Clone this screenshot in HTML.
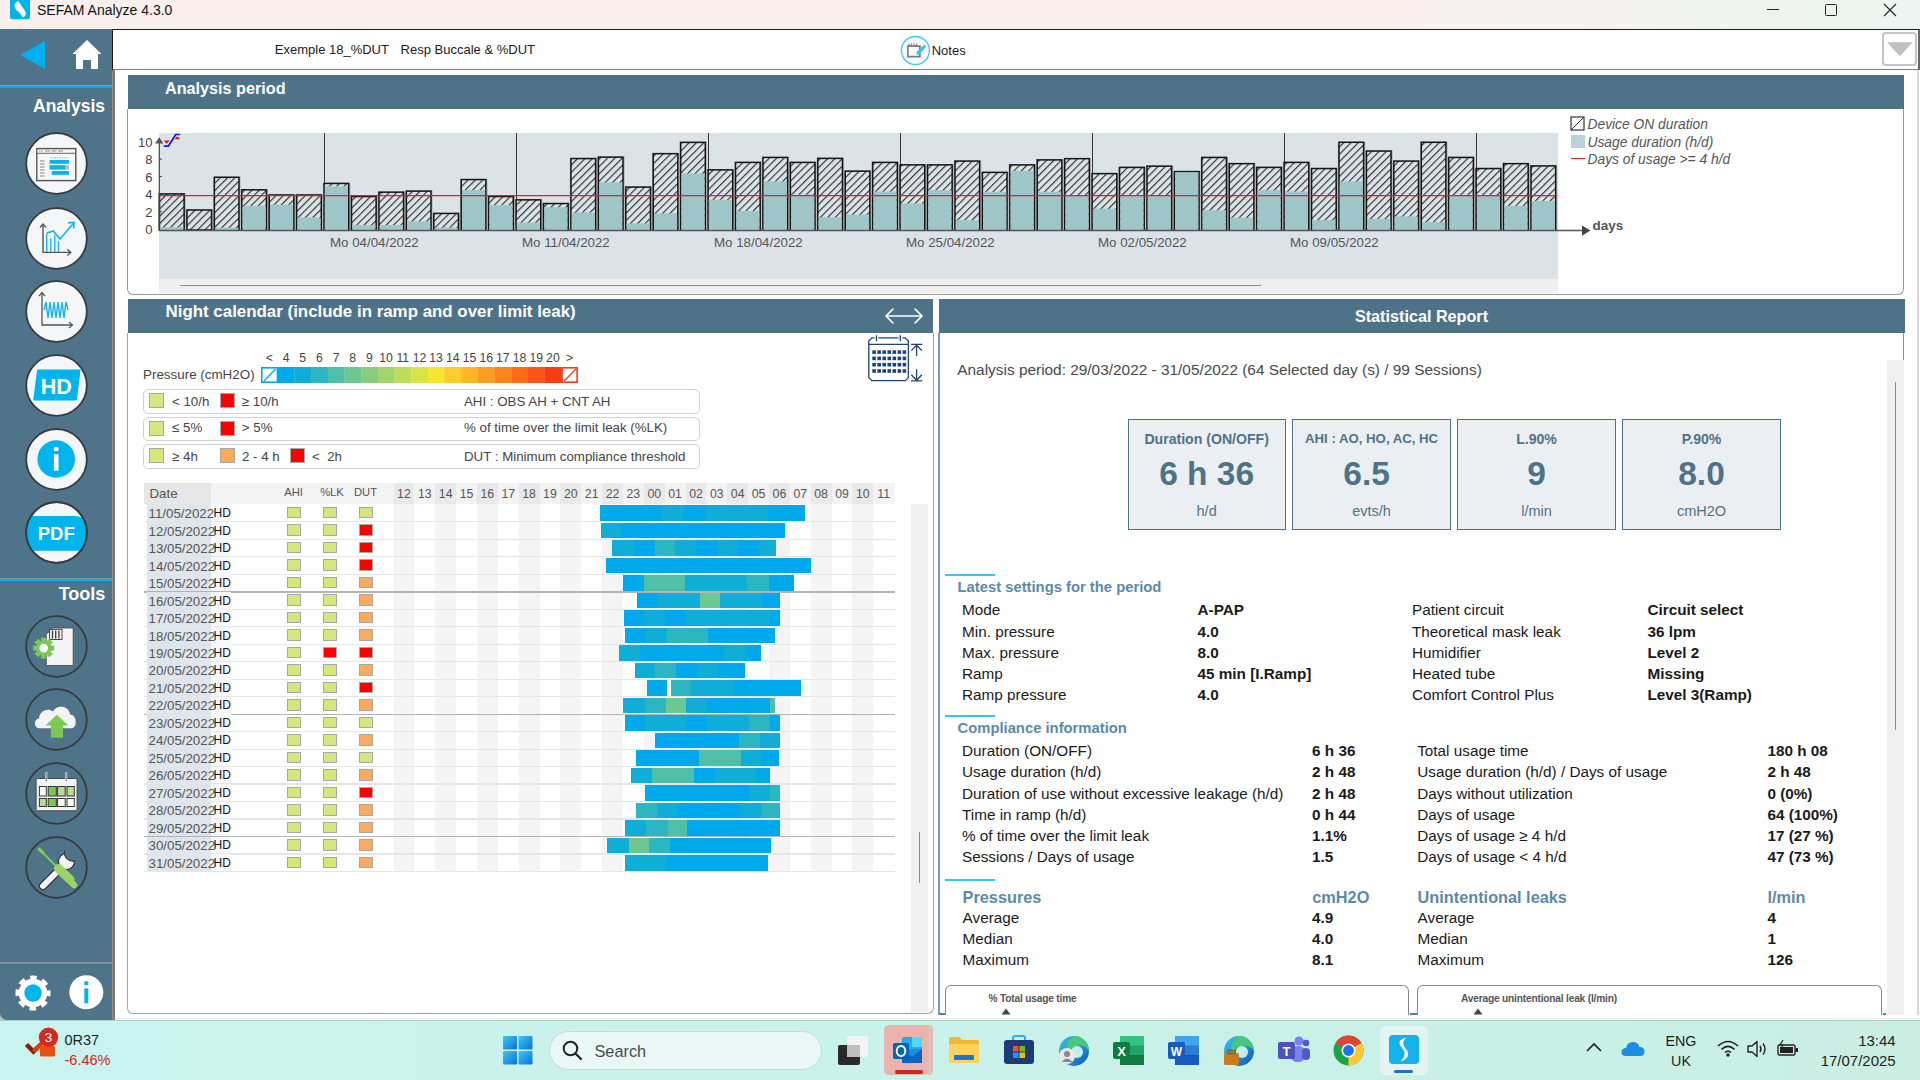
<!DOCTYPE html><html><head><meta charset="utf-8"><style>
html,body{margin:0;padding:0;width:1920px;height:1080px;overflow:hidden;background:#fff;font-family:'Liberation Sans', sans-serif;}
.t{position:absolute;white-space:pre;line-height:1;}
.r{position:absolute;box-sizing:border-box;}
svg{position:absolute;overflow:visible;}
</style></head><body>
<div class="r" style="left:0px;top:0px;width:1920px;height:29px;background:linear-gradient(90deg,#f9f0ee 0%,#f9f0ee 73%,#ebf5f1 100%);"></div>
<svg style="left:10px;top:0px" width="20" height="20" viewBox="0 0 20 20"><rect x="0" y="-3" width="20" height="22.2" rx="2.5" fill="#00b4ea"/><path d="M6.3 2.2 Q7.6 0.6 9 1.8 Q10.3 4.2 12.6 7.4 Q15.4 10.3 15.9 13.2 Q15.8 16.6 12.6 17.5 Q11.4 14.8 8.8 12 Q4.4 8.8 4.4 5.2 Q4.8 3.2 6.3 2.2 Z" fill="#fff"/></svg>
<div class="t" style="left:37.00px;top:3.15px;font-size:14px;color:#111;">SEFAM Analyze 4.3.0</div>
<div class="r" style="left:1767px;top:9px;width:12px;height:1px;background:#222;"></div>
<div class="r" style="left:1825px;top:4px;width:12px;height:12px;border:1.2px solid #222;border-radius:1.5px;"></div>
<svg style="left:1884px;top:4px" width="12" height="12"><path d="M0 0L12 12M12 0L0 12" stroke="#222" stroke-width="1.1"/></svg>
<div class="r" style="left:0px;top:1010px;width:10px;height:10px;background:#c4c4c4;"></div>
<div class="r" style="left:0px;top:29px;width:112px;height:991px;background:#4f7389;border-radius:0 0 0 7px;"></div>
<div class="r" style="left:112px;top:29px;width:1.2px;height:991px;background:#8e8e8e;"></div>
<div class="r" style="left:113.2px;top:29px;width:1.9px;height:991px;background:#767676;"></div>
<svg style="left:20px;top:41px" width="26" height="28"><path d="M25 0 L25 28 L0 14 Z" fill="#00b0ef"/></svg>
<svg style="left:72px;top:40px" width="30" height="30"><path d="M15 0 L29.5 14 L26 14 L26 29 L19 29 L19 20 L11 20 L11 29 L4 29 L4 14 L0.5 14 Z" fill="#fff"/></svg>
<div class="r" style="left:0px;top:85px;width:112px;height:1px;background:#8a9aa4;"></div>
<div class="r" style="left:0px;top:86px;width:112px;height:2px;background:#00b0f0;"></div>
<div class="t" style="right:1815.00px;top:98.19px;font-size:17.5px;color:#fff;font-weight:700;">Analysis</div>
<div class="r" style="left:0px;top:578px;width:112px;height:1px;background:#8a9aa4;"></div>
<div class="r" style="left:0px;top:579px;width:112px;height:1.6px;background:#00b0f0;"></div>
<div class="t" style="right:1814.70px;top:584.76px;font-size:18px;color:#fff;font-weight:700;">Tools</div>
<div class="r" style="left:0px;top:962px;width:112px;height:1px;background:#8a9aa4;"></div>
<div class="r" style="left:0px;top:963.2px;width:112px;height:1.3px;background:#00b0f0;"></div>
<svg style="left:25px;top:132.0px" width="63" height="63" viewBox="0 0 63 63"><circle cx="31.5" cy="31.5" r="30.3" fill="#f5f6f8" stroke="#363b40" stroke-width="1.8"/><rect x="11.8" y="16.6" width="39" height="32" fill="#f7f7f8" stroke="#555" stroke-width="1.4"/>
<line x1="11.8" y1="21.3" x2="50.8" y2="21.3" stroke="#666" stroke-width="1"/>
<path d="M14 19h1.5M16.5 19h1.5M20 19h5M26.5 19h5M33 19h5" stroke="#888" stroke-width="1"/>
<path d="M15 29h4.6M15 32h4.6M15 35h4.6M15 38h4.6M15 41h4.6M15 44h4.6" stroke="#888" stroke-width="1.1"/>
<path d="M25 25.8h19" stroke="#999" stroke-width="0.9" stroke-dasharray="1.2 1.2"/>
<rect x="24.6" y="28" width="19.3" height="3.8" fill="#00b4ec"/><rect x="24.6" y="33.2" width="16" height="4.4" fill="#00b4ec"/><rect x="40.6" y="33.2" width="3.3" height="4.4" fill="#b8b8b8"/><rect x="26.8" y="39" width="17.1" height="3.8" fill="#00b4ec"/></svg>
<svg style="left:25px;top:206.5px" width="63" height="63" viewBox="0 0 63 63"><circle cx="31.5" cy="31.5" r="30.3" fill="#f5f6f8" stroke="#363b40" stroke-width="1.8"/><path d="M18 17.5 V45.4 H45.5" fill="none" stroke="#555" stroke-width="1.4"/><path d="M15 20.5 L18 17 L21 20.5" fill="none" stroke="#555" stroke-width="1.3"/><path d="M42.3 42.3 L45.8 45.4 L42.3 48.5" fill="none" stroke="#555" stroke-width="1.3"/>
<path d="M21.7 45 V26.8 M25.8 45 V31.3 M29.8 45 V28.3 M33.5 45 V34.2" stroke="#1ab4e8" stroke-width="1.4"/>
<path d="M21.7 26.1 L28.3 23.9 L35 32 L48.5 16.2" fill="none" stroke="#1ab4e8" stroke-width="1.7"/><path d="M43 15.8 L49 15.5 L48.7 21.5" fill="none" stroke="#1ab4e8" stroke-width="1.7"/></svg>
<svg style="left:25px;top:280.0px" width="63" height="63" viewBox="0 0 63 63"><circle cx="31.5" cy="31.5" r="30.3" fill="#f5f6f8" stroke="#363b40" stroke-width="1.8"/><path d="M17 13 V45 H47" fill="none" stroke="#555" stroke-width="1.3"/><path d="M14 16 L17 12.5 L20 16" fill="none" stroke="#555" stroke-width="1.2"/><path d="M44 42 L47.5 45 L44 48" fill="none" stroke="#555" stroke-width="1.2"/>
<path d="M19 30 L21 22 L23 38 L25 22 L27 38 L29 22 L31 38 L33 22 L35 38 L37 22 L39 38 L41 22 L43 30" fill="none" stroke="#1ab4e8" stroke-width="1.4"/></svg>
<svg style="left:25px;top:354.0px" width="63" height="63" viewBox="0 0 63 63"><circle cx="31.5" cy="31.5" r="30.3" fill="#f5f6f8" stroke="#363b40" stroke-width="1.8"/><path d="M13.3 15.4 H55 Q55.6 15.4 55.5 16.4 L51.9 45.5 Q51.8 46.5 50.8 46.5 H9.2 Q8.2 46.5 8.3 45.5 L12 16.4 Q12.2 15.4 13.3 15.4 Z" fill="#00b4ec"/><text x="31.2" y="39.8" font-family="Liberation Sans" font-weight="700" font-size="21.5" fill="#fff" text-anchor="middle">HD</text></svg>
<svg style="left:25px;top:427.5px" width="63" height="63" viewBox="0 0 63 63"><circle cx="31.5" cy="31.5" r="30.3" fill="#f5f6f8" stroke="#363b40" stroke-width="1.8"/><circle cx="31.2" cy="31" r="18.8" fill="#00b4ec"/><rect x="28.9" y="19.3" width="4.6" height="3.8" rx="0.8" fill="#fff"/><rect x="28.9" y="26.3" width="4.6" height="16.4" fill="#fff"/></svg>
<svg style="left:25px;top:501.0px" width="63" height="63" viewBox="0 0 63 63"><defs><clipPath id="pc"><circle cx="31.5" cy="31.5" r="30.3"/></clipPath></defs><circle cx="31.5" cy="31.5" r="30.3" fill="#f5f6f8" stroke="#363b40" stroke-width="1.8"/><path d="M0 15 L50 15 L63 17 L63 49.7 L0 49.7 Z" fill="#00b4ec" clip-path="url(#pc)"/><circle cx="31.5" cy="31.5" r="30.3" fill="none" stroke="#363b40" stroke-width="1.8"/><text x="31.2" y="38.6" font-family="Liberation Sans" font-weight="700" font-size="18.5" fill="#fff" text-anchor="middle">PDF</text></svg>
<svg style="left:25px;top:614.5px" width="63" height="63" viewBox="0 0 63 63"><circle cx="31.5" cy="31.5" r="30.3" fill="none" stroke="#363b40" stroke-width="1.8"/><path d="M27.5 13 H48.2 V50.5 H21.3 V19.5 Z" fill="#f4f4f6" stroke="#444" stroke-width="0.8"/><rect x="24.5" y="14.3" width="12.5" height="10.2" fill="#f4f4f6" stroke="#333" stroke-width="0.9"/><path d="M27.5 15.5 V23.5 M30.7 15.5 V23.5 M33.9 15.5 V23.5" stroke="#333" stroke-width="1.3"/>
<g transform="translate(18.7,33.1)"><rect x="-2.6" y="-10.5" width="5.2" height="5" fill="#7dc855" transform="rotate(0)"/><rect x="-2.6" y="-10.5" width="5.2" height="5" fill="#7dc855" transform="rotate(45)"/><rect x="-2.6" y="-10.5" width="5.2" height="5" fill="#7dc855" transform="rotate(90)"/><rect x="-2.6" y="-10.5" width="5.2" height="5" fill="#7dc855" transform="rotate(135)"/><rect x="-2.6" y="-10.5" width="5.2" height="5" fill="#7dc855" transform="rotate(180)"/><rect x="-2.6" y="-10.5" width="5.2" height="5" fill="#7dc855" transform="rotate(225)"/><rect x="-2.6" y="-10.5" width="5.2" height="5" fill="#7dc855" transform="rotate(270)"/><rect x="-2.6" y="-10.5" width="5.2" height="5" fill="#7dc855" transform="rotate(315)"/><circle r="7.6" fill="#7dc855"/><circle r="4.3" fill="#fff"/></g></svg>
<svg style="left:25px;top:688.0px" width="63" height="63" viewBox="0 0 63 63"><circle cx="31.5" cy="31.5" r="30.3" fill="none" stroke="#363b40" stroke-width="1.8"/><path d="M14.5 40.3 C8.5 40.3 8.5 31 14 30.5 C14.5 23 23 19.5 28 23.5 C31 16.5 44 17 45 26.5 C52 26.5 53 40.3 46 40.3 Z" fill="#f4f4f4"/><path d="M31.9 26.8 L43.4 37.5 H38 V49.7 H25.9 V37.5 H20.5 Z" fill="#7dc855"/></svg>
<svg style="left:25px;top:761.5px" width="63" height="63" viewBox="0 0 63 63"><circle cx="31.5" cy="31.5" r="30.3" fill="none" stroke="#363b40" stroke-width="1.8"/><rect x="11.1" y="16.5" width="41" height="32.3" rx="1.5" fill="#f4f4f4" stroke="#444" stroke-width="1"/><path d="M21.3 11 V19 M41.2 11 V19" stroke="#ddd" stroke-width="2.2" stroke-linecap="round"/><path d="M21.3 11 V19 M41.2 11 V19" stroke="#555" stroke-width="0.7"/>
<g stroke="#333" stroke-width="1"><rect x="14.4" y="24.5" width="6.9" height="9.5" fill="#fff"/><rect x="23.2" y="24.5" width="8.1" height="9.5" fill="#7dc855"/><rect x="32.6" y="24.5" width="7.6" height="9.5" fill="#b6dc98"/><rect x="42" y="24.5" width="7.3" height="9.5" fill="#b6dc98"/>
<rect x="14.4" y="36.5" width="6.9" height="8" fill="#b6dc98"/><rect x="23.2" y="36.5" width="8.1" height="8" fill="#7dc855"/><rect x="32.6" y="36.5" width="7.6" height="8" fill="#fff"/><rect x="42" y="36.5" width="7.3" height="8" fill="#fff"/></g></svg>
<svg style="left:25px;top:835.5px" width="63" height="63" viewBox="0 0 63 63"><circle cx="31.5" cy="31.5" r="30.3" fill="none" stroke="#363b40" stroke-width="1.8"/><path d="M18 50 L30 38" stroke="#2e3338" stroke-width="8.2" stroke-linecap="round"/><path d="M18 50 L30 38" stroke="#f4f4f4" stroke-width="6" stroke-linecap="round"/>
<circle cx="41.5" cy="25.5" r="8.6" fill="#2e3338"/><circle cx="41.5" cy="25.5" r="7.4" fill="#f4f4f4"/><path d="M39 14 L44 11.5 L53 20.5 L50.5 25.5 Q45 26 41.5 22.5 Q38.5 19 39 14 Z" fill="#4f7389"/><path d="M39.6 14.6 Q38.8 19.5 41.8 22.7 Q45.2 25.8 50 25" fill="none" stroke="#2e3338" stroke-width="1.1"/>
<path d="M16 15 L32 31" stroke="#7dc855" stroke-width="2"/><path d="M14.2 13.2 L17.6 16.6" stroke="#7dc855" stroke-width="3.6" stroke-linecap="round"/>
<path d="M33.5 32.5 L45 43.5" stroke="#9cd46a" stroke-width="9" stroke-linecap="round"/><path d="M46.8 46.8 L49 49" stroke="#9cd46a" stroke-width="6.5" stroke-linecap="round"/></svg>
<svg style="left:14.5px;top:974.5px" width="36" height="36" viewBox="0 0 36 36"><g transform="translate(18,18)"><circle r="14.3" fill="#fff"/><circle r="15.6" fill="none" stroke="#fff" stroke-width="3.9" stroke-dasharray="6.6 5.65" stroke-dashoffset="3.3" stroke-linejoin="round"/><circle r="8.7" fill="#00b4ec"/></g></svg>
<svg style="left:68.5px;top:975px" width="35" height="35" viewBox="0 0 35 35"><circle cx="17.3" cy="17.3" r="17" fill="#fff"/><rect x="15.3" y="6.3" width="4" height="3.8" fill="#00b4ec"/><rect x="15.3" y="13.4" width="4" height="15" fill="#00b4ec"/></svg>
<div class="r" style="left:112px;top:29px;width:1808px;height:42px;background:#fff;border-top:1.5px solid #1a1a1a;border-left:1.5px solid #1a1a1a;border-bottom:2.2px solid #7c7c7c;border-right:2px solid #666;"></div>
<div class="t" style="left:274.80px;top:42.75px;font-size:13px;color:#1a1a1a;">Exemple 18_%DUT</div>
<div class="t" style="left:400.60px;top:42.75px;font-size:13px;color:#1a1a1a;">Resp Buccale &amp; %DUT</div>
<svg style="left:900px;top:35px" width="31" height="31" viewBox="0 0 31 31"><circle cx="15.4" cy="15.5" r="14" fill="#f6f7f9" stroke="#4cc6f0" stroke-width="1.4"/><path d="M7.9 11.2 H19.9 V21.7 H7.9 Z" fill="#fbfbfc" stroke="#7a7c80" stroke-width="1.7"/><path d="M9 8.5 V11 M11.5 8.5 V11 M14 8.5 V11 M16.5 8.5 V11" stroke="#888" stroke-width="1.1"/><path d="M18 18 L24.3 11.7" stroke="#3cc0ee" stroke-width="3.2" stroke-linecap="round"/></svg>
<div class="t" style="left:931.70px;top:44.00px;font-size:13px;color:#1a1a1a;">Notes</div>
<div class="r" style="left:1882.3px;top:32.3px;width:34.4px;height:33.4px;border:2.3px solid #c4c4c4;border-radius:4px;background:#fff;"></div>
<svg style="left:1886.5px;top:41.5px" width="26" height="15"><path d="M0 0.3 H25.7 L12.85 14.2 Z" fill="#c0c0c0"/></svg>
<div class="r" style="left:115px;top:70px;width:1805px;height:950px;background:#fff;"></div>
<div class="r" style="left:1917px;top:70px;width:1.5px;height:950px;background:#d8d8d8;"></div>
<div class="r" style="left:128px;top:75px;width:1775.5px;height:34px;background:#4e7389;"></div>
<div class="t" style="left:165.00px;top:80.29px;font-size:16.2px;color:#fff;font-weight:700;">Analysis period</div>
<div class="r" style="left:127px;top:109px;width:1777px;height:186px;border:1.6px solid #999;border-top:none;border-radius:0 0 6px 6px;"></div>
<div class="r" style="left:158.5px;top:133px;width:1399px;height:145.5px;background:#dce3e7;"></div>
<div class="r" style="left:158.5px;top:278.5px;width:1399px;height:14.8px;background:#efefef;"></div>
<div class="r" style="left:180px;top:284.8px;width:1080.5px;height:1.5px;background:#8c8c8c;"></div>
<div class="r" style="left:323.5px;top:133px;width:1px;height:97px;background:#333;"></div>
<div class="r" style="left:515.5px;top:133px;width:1px;height:97px;background:#333;"></div>
<div class="r" style="left:707.5px;top:133px;width:1px;height:97px;background:#333;"></div>
<div class="r" style="left:899.5px;top:133px;width:1px;height:97px;background:#333;"></div>
<div class="r" style="left:1091.5px;top:133px;width:1px;height:97px;background:#333;"></div>
<div class="r" style="left:1283.5px;top:133px;width:1px;height:97px;background:#333;"></div>
<div class="r" style="left:1475.5px;top:133px;width:1px;height:97px;background:#333;"></div>
<svg style="left:0;top:0" width="1920" height="300"><defs><pattern id="hatch" patternUnits="userSpaceOnUse" width="5.2" height="8" patternTransform="rotate(45)"><rect width="5.2" height="8" fill="#dce3e7"/><line x1="0.6" y1="0" x2="0.6" y2="8" stroke="#222" stroke-width="1.05"/></pattern></defs><rect x="158.30" y="193.22" width="27.43" height="36.78" fill="#b0b0b0"/><rect x="159.50" y="193.92" width="24.63" height="36.08" fill="url(#hatch)" stroke="#151515" stroke-width="1.5"/><rect x="160.25" y="227.35" width="23.13" height="2.65" fill="#9ec6c8"/><rect x="185.73" y="209.32" width="27.43" height="20.68" fill="#b0b0b0"/><rect x="186.93" y="210.02" width="24.63" height="19.98" fill="url(#hatch)" stroke="#151515" stroke-width="1.5"/><rect x="213.16" y="176.60" width="27.43" height="53.40" fill="#b0b0b0"/><rect x="214.36" y="177.30" width="24.63" height="52.70" fill="url(#hatch)" stroke="#151515" stroke-width="1.5"/><rect x="215.11" y="227.79" width="23.13" height="2.21" fill="#9ec6c8"/><rect x="240.59" y="189.11" width="27.43" height="40.89" fill="#b0b0b0"/><rect x="241.79" y="189.81" width="24.63" height="40.19" fill="url(#hatch)" stroke="#151515" stroke-width="1.5"/><rect x="242.54" y="205.91" width="23.13" height="24.09" fill="#9ec6c8"/><rect x="268.02" y="194.27" width="27.43" height="35.73" fill="#b0b0b0"/><rect x="269.22" y="194.97" width="24.63" height="35.03" fill="url(#hatch)" stroke="#151515" stroke-width="1.5"/><rect x="269.97" y="204.60" width="23.13" height="25.40" fill="#9ec6c8"/><rect x="295.45" y="194.27" width="27.43" height="35.73" fill="#b0b0b0"/><rect x="296.65" y="194.97" width="24.63" height="35.03" fill="url(#hatch)" stroke="#151515" stroke-width="1.5"/><rect x="297.40" y="217.46" width="23.13" height="12.54" fill="#9ec6c8"/><rect x="322.88" y="182.72" width="27.43" height="47.28" fill="#b0b0b0"/><rect x="324.08" y="183.42" width="24.63" height="46.58" fill="url(#hatch)" stroke="#151515" stroke-width="1.5"/><rect x="324.83" y="186.22" width="23.13" height="43.78" fill="#9ec6c8"/><rect x="350.31" y="195.85" width="27.43" height="34.15" fill="#b0b0b0"/><rect x="351.51" y="196.55" width="24.63" height="33.45" fill="url(#hatch)" stroke="#151515" stroke-width="1.5"/><rect x="352.26" y="224.99" width="23.13" height="5.01" fill="#9ec6c8"/><rect x="377.74" y="191.47" width="27.43" height="38.53" fill="#b0b0b0"/><rect x="378.94" y="192.17" width="24.63" height="37.83" fill="url(#hatch)" stroke="#151515" stroke-width="1.5"/><rect x="379.69" y="224.99" width="23.13" height="5.01" fill="#9ec6c8"/><rect x="405.17" y="190.43" width="27.43" height="39.57" fill="#b0b0b0"/><rect x="406.37" y="191.12" width="24.63" height="38.87" fill="url(#hatch)" stroke="#151515" stroke-width="1.5"/><rect x="407.12" y="221.31" width="23.13" height="8.69" fill="#9ec6c8"/><rect x="432.60" y="212.74" width="27.43" height="17.26" fill="#b0b0b0"/><rect x="433.80" y="213.44" width="24.63" height="16.56" fill="url(#hatch)" stroke="#151515" stroke-width="1.5"/><rect x="434.55" y="227.61" width="23.13" height="2.39" fill="#9ec6c8"/><rect x="460.03" y="178.88" width="27.43" height="51.12" fill="#b0b0b0"/><rect x="461.23" y="179.57" width="24.63" height="50.42" fill="url(#hatch)" stroke="#151515" stroke-width="1.5"/><rect x="461.98" y="189.99" width="23.13" height="40.01" fill="#9ec6c8"/><rect x="487.46" y="195.85" width="27.43" height="34.15" fill="#b0b0b0"/><rect x="488.66" y="196.55" width="24.63" height="33.45" fill="url(#hatch)" stroke="#151515" stroke-width="1.5"/><rect x="489.41" y="205.04" width="23.13" height="24.96" fill="#9ec6c8"/><rect x="514.89" y="199.17" width="27.43" height="30.83" fill="#b0b0b0"/><rect x="516.09" y="199.87" width="24.63" height="30.13" fill="url(#hatch)" stroke="#151515" stroke-width="1.5"/><rect x="516.84" y="222.54" width="23.13" height="7.46" fill="#9ec6c8"/><rect x="542.32" y="202.85" width="27.43" height="27.15" fill="#b0b0b0"/><rect x="543.52" y="203.55" width="24.63" height="26.45" fill="url(#hatch)" stroke="#151515" stroke-width="1.5"/><rect x="544.27" y="207.22" width="23.13" height="22.78" fill="#9ec6c8"/><rect x="569.75" y="157.88" width="27.43" height="72.12" fill="#b0b0b0"/><rect x="570.95" y="158.57" width="24.63" height="71.42" fill="url(#hatch)" stroke="#151515" stroke-width="1.5"/><rect x="571.70" y="212.47" width="23.13" height="17.53" fill="#9ec6c8"/><rect x="597.18" y="156.47" width="27.43" height="73.53" fill="#b0b0b0"/><rect x="598.38" y="157.17" width="24.63" height="72.83" fill="url(#hatch)" stroke="#151515" stroke-width="1.5"/><rect x="599.13" y="182.38" width="23.13" height="47.62" fill="#9ec6c8"/><rect x="624.61" y="186.40" width="27.43" height="43.60" fill="#b0b0b0"/><rect x="625.81" y="187.10" width="24.63" height="42.90" fill="url(#hatch)" stroke="#151515" stroke-width="1.5"/><rect x="626.56" y="223.41" width="23.13" height="6.59" fill="#9ec6c8"/><rect x="652.04" y="152.97" width="27.43" height="77.03" fill="#b0b0b0"/><rect x="653.24" y="153.67" width="24.63" height="76.33" fill="url(#hatch)" stroke="#151515" stroke-width="1.5"/><rect x="653.99" y="213.44" width="23.13" height="16.56" fill="#9ec6c8"/><rect x="679.47" y="141.69" width="27.43" height="88.31" fill="#b0b0b0"/><rect x="680.67" y="142.39" width="24.63" height="87.61" fill="url(#hatch)" stroke="#151515" stroke-width="1.5"/><rect x="681.42" y="173.45" width="23.13" height="56.55" fill="#9ec6c8"/><rect x="706.90" y="169.16" width="27.43" height="60.84" fill="#b0b0b0"/><rect x="708.10" y="169.86" width="24.63" height="60.14" fill="url(#hatch)" stroke="#151515" stroke-width="1.5"/><rect x="708.85" y="199.70" width="23.13" height="30.30" fill="#9ec6c8"/><rect x="734.33" y="161.72" width="27.43" height="68.28" fill="#b0b0b0"/><rect x="735.53" y="162.42" width="24.63" height="67.58" fill="url(#hatch)" stroke="#151515" stroke-width="1.5"/><rect x="736.28" y="210.99" width="23.13" height="19.01" fill="#9ec6c8"/><rect x="761.76" y="156.74" width="27.43" height="73.26" fill="#b0b0b0"/><rect x="762.96" y="157.44" width="24.63" height="72.56" fill="url(#hatch)" stroke="#151515" stroke-width="1.5"/><rect x="763.71" y="181.41" width="23.13" height="48.59" fill="#9ec6c8"/><rect x="789.19" y="161.72" width="27.43" height="68.28" fill="#b0b0b0"/><rect x="790.39" y="162.42" width="24.63" height="67.58" fill="url(#hatch)" stroke="#151515" stroke-width="1.5"/><rect x="791.14" y="194.71" width="23.13" height="35.29" fill="#9ec6c8"/><rect x="816.62" y="157.70" width="27.43" height="72.30" fill="#b0b0b0"/><rect x="817.82" y="158.40" width="24.63" height="71.60" fill="url(#hatch)" stroke="#151515" stroke-width="1.5"/><rect x="818.57" y="217.20" width="23.13" height="12.80" fill="#9ec6c8"/><rect x="844.05" y="170.47" width="27.43" height="59.53" fill="#b0b0b0"/><rect x="845.25" y="171.17" width="24.63" height="58.83" fill="url(#hatch)" stroke="#151515" stroke-width="1.5"/><rect x="846.00" y="214.66" width="23.13" height="15.34" fill="#9ec6c8"/><rect x="871.48" y="161.72" width="27.43" height="68.28" fill="#b0b0b0"/><rect x="872.68" y="162.42" width="24.63" height="67.58" fill="url(#hatch)" stroke="#151515" stroke-width="1.5"/><rect x="873.43" y="191.47" width="23.13" height="38.53" fill="#9ec6c8"/><rect x="898.91" y="164.18" width="27.43" height="65.82" fill="#b0b0b0"/><rect x="900.11" y="164.88" width="24.63" height="65.12" fill="url(#hatch)" stroke="#151515" stroke-width="1.5"/><rect x="900.86" y="203.46" width="23.13" height="26.54" fill="#9ec6c8"/><rect x="926.34" y="164.18" width="27.43" height="65.82" fill="#b0b0b0"/><rect x="927.54" y="164.88" width="24.63" height="65.12" fill="url(#hatch)" stroke="#151515" stroke-width="1.5"/><rect x="928.29" y="190.16" width="23.13" height="39.84" fill="#9ec6c8"/><rect x="953.77" y="160.41" width="27.43" height="69.59" fill="#b0b0b0"/><rect x="954.97" y="161.11" width="24.63" height="68.89" fill="url(#hatch)" stroke="#151515" stroke-width="1.5"/><rect x="955.72" y="220.17" width="23.13" height="9.83" fill="#9ec6c8"/><rect x="981.20" y="171.70" width="27.43" height="58.30" fill="#b0b0b0"/><rect x="982.40" y="172.40" width="24.63" height="57.60" fill="url(#hatch)" stroke="#151515" stroke-width="1.5"/><rect x="983.15" y="191.74" width="23.13" height="38.26" fill="#9ec6c8"/><rect x="1008.63" y="164.18" width="27.43" height="65.82" fill="#b0b0b0"/><rect x="1009.83" y="164.88" width="24.63" height="65.12" fill="url(#hatch)" stroke="#151515" stroke-width="1.5"/><rect x="1010.58" y="170.91" width="23.13" height="59.09" fill="#9ec6c8"/><rect x="1036.06" y="159.19" width="27.43" height="70.81" fill="#b0b0b0"/><rect x="1037.26" y="159.89" width="24.63" height="70.11" fill="url(#hatch)" stroke="#151515" stroke-width="1.5"/><rect x="1038.01" y="191.74" width="23.13" height="38.26" fill="#9ec6c8"/><rect x="1063.49" y="157.96" width="27.43" height="72.04" fill="#b0b0b0"/><rect x="1064.69" y="158.66" width="24.63" height="71.34" fill="url(#hatch)" stroke="#151515" stroke-width="1.5"/><rect x="1065.44" y="195.85" width="23.13" height="34.15" fill="#9ec6c8"/><rect x="1090.92" y="172.93" width="27.43" height="57.07" fill="#b0b0b0"/><rect x="1092.12" y="173.62" width="24.63" height="56.37" fill="url(#hatch)" stroke="#151515" stroke-width="1.5"/><rect x="1092.87" y="208.71" width="23.13" height="21.29" fill="#9ec6c8"/><rect x="1118.35" y="166.71" width="27.43" height="63.29" fill="#b0b0b0"/><rect x="1119.55" y="167.41" width="24.63" height="62.59" fill="url(#hatch)" stroke="#151515" stroke-width="1.5"/><rect x="1120.30" y="195.85" width="23.13" height="34.15" fill="#9ec6c8"/><rect x="1145.78" y="165.49" width="27.43" height="64.51" fill="#b0b0b0"/><rect x="1146.98" y="166.19" width="24.63" height="63.81" fill="url(#hatch)" stroke="#151515" stroke-width="1.5"/><rect x="1147.73" y="195.85" width="23.13" height="34.15" fill="#9ec6c8"/><rect x="1173.21" y="170.91" width="27.43" height="59.09" fill="#b0b0b0"/><rect x="1174.41" y="171.61" width="24.63" height="58.39" fill="url(#hatch)" stroke="#151515" stroke-width="1.5"/><rect x="1175.16" y="172.22" width="23.13" height="57.78" fill="#9ec6c8"/><rect x="1200.64" y="156.74" width="27.43" height="73.26" fill="#b0b0b0"/><rect x="1201.84" y="157.44" width="24.63" height="72.56" fill="url(#hatch)" stroke="#151515" stroke-width="1.5"/><rect x="1202.59" y="210.20" width="23.13" height="19.80" fill="#9ec6c8"/><rect x="1228.07" y="162.95" width="27.43" height="67.05" fill="#b0b0b0"/><rect x="1229.27" y="163.65" width="24.63" height="66.35" fill="url(#hatch)" stroke="#151515" stroke-width="1.5"/><rect x="1230.02" y="217.72" width="23.13" height="12.28" fill="#9ec6c8"/><rect x="1255.50" y="166.71" width="27.43" height="63.29" fill="#b0b0b0"/><rect x="1256.70" y="167.41" width="24.63" height="62.59" fill="url(#hatch)" stroke="#151515" stroke-width="1.5"/><rect x="1257.45" y="190.16" width="23.13" height="39.84" fill="#9ec6c8"/><rect x="1282.93" y="161.72" width="27.43" height="68.28" fill="#b0b0b0"/><rect x="1284.13" y="162.42" width="24.63" height="67.58" fill="url(#hatch)" stroke="#151515" stroke-width="1.5"/><rect x="1284.88" y="191.47" width="23.13" height="38.53" fill="#9ec6c8"/><rect x="1310.36" y="167.85" width="27.43" height="62.15" fill="#b0b0b0"/><rect x="1311.56" y="168.55" width="24.63" height="61.45" fill="url(#hatch)" stroke="#151515" stroke-width="1.5"/><rect x="1312.31" y="220.17" width="23.13" height="9.83" fill="#9ec6c8"/><rect x="1337.79" y="141.60" width="27.43" height="88.40" fill="#b0b0b0"/><rect x="1338.99" y="142.30" width="24.63" height="87.70" fill="url(#hatch)" stroke="#151515" stroke-width="1.5"/><rect x="1339.74" y="181.41" width="23.13" height="48.59" fill="#9ec6c8"/><rect x="1365.22" y="150.35" width="27.43" height="79.65" fill="#b0b0b0"/><rect x="1366.42" y="151.05" width="24.63" height="78.95" fill="url(#hatch)" stroke="#151515" stroke-width="1.5"/><rect x="1367.17" y="218.95" width="23.13" height="11.05" fill="#9ec6c8"/><rect x="1392.65" y="160.41" width="27.43" height="69.59" fill="#b0b0b0"/><rect x="1393.85" y="161.11" width="24.63" height="68.89" fill="url(#hatch)" stroke="#151515" stroke-width="1.5"/><rect x="1394.60" y="216.41" width="23.13" height="13.59" fill="#9ec6c8"/><rect x="1420.08" y="141.60" width="27.43" height="88.40" fill="#b0b0b0"/><rect x="1421.28" y="142.30" width="24.63" height="87.70" fill="url(#hatch)" stroke="#151515" stroke-width="1.5"/><rect x="1422.03" y="222.19" width="23.13" height="7.81" fill="#9ec6c8"/><rect x="1447.51" y="156.74" width="27.43" height="73.26" fill="#b0b0b0"/><rect x="1448.71" y="157.44" width="24.63" height="72.56" fill="url(#hatch)" stroke="#151515" stroke-width="1.5"/><rect x="1449.46" y="195.85" width="23.13" height="34.15" fill="#9ec6c8"/><rect x="1474.94" y="167.85" width="27.43" height="62.15" fill="#b0b0b0"/><rect x="1476.14" y="168.55" width="24.63" height="61.45" fill="url(#hatch)" stroke="#151515" stroke-width="1.5"/><rect x="1476.89" y="195.85" width="23.13" height="34.15" fill="#9ec6c8"/><rect x="1502.37" y="162.95" width="27.43" height="67.05" fill="#b0b0b0"/><rect x="1503.57" y="163.65" width="24.63" height="66.35" fill="url(#hatch)" stroke="#151515" stroke-width="1.5"/><rect x="1504.32" y="205.91" width="23.13" height="24.09" fill="#9ec6c8"/><rect x="1529.80" y="165.22" width="27.43" height="64.78" fill="#b0b0b0"/><rect x="1531.00" y="165.92" width="24.63" height="64.08" fill="url(#hatch)" stroke="#151515" stroke-width="1.5"/><rect x="1531.75" y="200.92" width="23.13" height="29.08" fill="#9ec6c8"/><line x1="159" y1="195.6" x2="1557.5" y2="195.6" stroke="#e41e26" stroke-width="1.3"/><line x1="159" y1="230.6" x2="1588" y2="230.6" stroke="#555" stroke-width="1.5"/><path d="M1582 225.5 L1590.5 230.6 L1582 235.7 Z" fill="#444"/><line x1="159.3" y1="142" x2="159.3" y2="230.6" stroke="#444" stroke-width="1.2"/><path d="M155 143.6 L159.3 137.3 L163.4 143.6 Z" fill="#555"/><line x1="159" y1="211.6" x2="162" y2="211.6" stroke="#444" stroke-width="1"/><line x1="159" y1="194.1" x2="162" y2="194.1" stroke="#444" stroke-width="1"/><line x1="159" y1="176.6" x2="162" y2="176.6" stroke="#444" stroke-width="1"/><line x1="159" y1="159.1" x2="162" y2="159.1" stroke="#444" stroke-width="1"/><path d="M163.8 140.6 H169.8 L166.6 143.8 Z M174.6 139.3 H179.9 L179.6 138.3 L177 136.6 Z" fill="#e41010"/><path d="M164.4 146.2 H168.3 L175.8 134.5 H179.4" fill="none" stroke="#1515e6" stroke-width="1.7" stroke-linecap="round" stroke-linejoin="round"/></svg>
<div class="t" style="right:1767.50px;top:223.30px;font-size:13px;color:#444;">0</div>
<div class="t" style="right:1767.50px;top:205.80px;font-size:13px;color:#444;">2</div>
<div class="t" style="right:1767.50px;top:188.30px;font-size:13px;color:#444;">4</div>
<div class="t" style="right:1767.50px;top:170.80px;font-size:13px;color:#444;">6</div>
<div class="t" style="right:1767.50px;top:153.30px;font-size:13px;color:#444;">8</div>
<div class="t" style="right:1767.50px;top:135.80px;font-size:13px;color:#444;">10</div>
<div class="t" style="left:330.00px;top:236.24px;font-size:13.3px;color:#555;">Mo 04/04/2022</div>
<div class="t" style="left:522.00px;top:236.24px;font-size:13.3px;color:#555;">Mo 11/04/2022</div>
<div class="t" style="left:714.00px;top:236.24px;font-size:13.3px;color:#555;">Mo 18/04/2022</div>
<div class="t" style="left:906.00px;top:236.24px;font-size:13.3px;color:#555;">Mo 25/04/2022</div>
<div class="t" style="left:1098.00px;top:236.24px;font-size:13.3px;color:#555;">Mo 02/05/2022</div>
<div class="t" style="left:1290.00px;top:236.24px;font-size:13.3px;color:#555;">Mo 09/05/2022</div>
<div class="t" style="left:1592.50px;top:218.57px;font-size:13.5px;color:#555;font-weight:700;">days</div>
<svg style="left:1570px;top:116px" width="16" height="16"><defs><clipPath id="lc"><rect x="1" y="1" width="13" height="13"/></clipPath></defs><rect x="1" y="1" width="13" height="13" fill="#fff" stroke="#333" stroke-width="1.2"/><line x1="1" y1="14" x2="14" y2="1" stroke="#333" stroke-width="1"/></svg>
<div class="r" style="left:1571px;top:134.5px;width:13.5px;height:13.5px;background:#b9d4d8;"></div>
<div class="r" style="left:1571px;top:157.5px;width:13.5px;height:1.8px;background:#e8202a;"></div>
<div class="t" style="left:1587.50px;top:118.32px;font-size:13.8px;color:#555;font-style:italic;">Device ON duration</div>
<div class="t" style="left:1587.50px;top:135.82px;font-size:13.8px;color:#555;font-style:italic;">Usage duration (h/d)</div>
<div class="t" style="left:1587.50px;top:153.32px;font-size:13.8px;color:#555;font-style:italic;">Days of usage &gt;= 4 h/d</div>
<div class="r" style="left:128px;top:299px;width:804.8px;height:33.5px;background:#4e7389;"></div>
<div class="t" style="left:165.50px;top:304.19px;font-size:16.9px;color:#fff;font-weight:700;">Night calendar (include in ramp and over limit leak)</div>
<svg style="left:884px;top:307px" width="40" height="18"><path d="M2 9 H38 M9 2 L2 9 L9 16 M31 2 L38 9 L31 16" fill="none" stroke="#fff" stroke-width="1.6" stroke-linecap="round" stroke-linejoin="round"/></svg>
<div class="r" style="left:127px;top:332.5px;width:806.5px;height:681px;border:1.7px solid #a4a4a4;border-top:none;border-radius:0 0 6px 6px;"></div>
<svg style="left:866px;top:334px" width="60" height="50" viewBox="0 0 60 50"><g fill="none" stroke="#1f4470" stroke-width="1.3">
<path d="M8.6 3.8 H6 L2.8 7 V43.6 L5.8 46.7 H39.4 L42.4 43.6 V7 L39.2 3.8 H36.4 M12.4 3.8 H32.4"/>
<path d="M10.5 1.2 V7.3 M34.3 1.2 V7.3 M2.8 10.4 H42.4"/>
<path d="M45.1 10.4 H56.3 M50.6 10.8 V22 M45.3 16.6 L50.6 11.2 L55.9 16.6"/>
<path d="M45.1 46.9 H56.3 M50.6 35.3 V46.5 M45.3 40.8 L50.6 46.2 L55.9 40.8"/></g>
<rect x="6.30" y="16.30" width="3.6" height="3.6" fill="#1f4470"/><rect x="11.35" y="16.30" width="3.6" height="3.6" fill="#1f4470"/><rect x="16.40" y="16.30" width="3.6" height="3.6" fill="#1f4470"/><rect x="21.45" y="16.30" width="3.6" height="3.6" fill="#1f4470"/><rect x="26.50" y="16.30" width="3.6" height="3.6" fill="#1f4470"/><rect x="31.55" y="16.30" width="3.6" height="3.6" fill="#1f4470"/><rect x="36.60" y="16.30" width="3.6" height="3.6" fill="#1f4470"/><rect x="6.30" y="22.60" width="3.6" height="3.6" fill="#1f4470"/><rect x="11.35" y="22.60" width="3.6" height="3.6" fill="#1f4470"/><rect x="16.40" y="22.60" width="3.6" height="3.6" fill="#1f4470"/><rect x="21.45" y="22.60" width="3.6" height="3.6" fill="#1f4470"/><rect x="26.50" y="22.60" width="3.6" height="3.6" fill="#1f4470"/><rect x="31.55" y="22.60" width="3.6" height="3.6" fill="#1f4470"/><rect x="36.60" y="22.60" width="3.6" height="3.6" fill="#1f4470"/><rect x="6.30" y="28.90" width="3.6" height="3.6" fill="#1f4470"/><rect x="11.35" y="28.90" width="3.6" height="3.6" fill="#1f4470"/><rect x="16.40" y="28.90" width="3.6" height="3.6" fill="#1f4470"/><rect x="21.45" y="28.90" width="3.6" height="3.6" fill="#1f4470"/><rect x="26.50" y="28.90" width="3.6" height="3.6" fill="#1f4470"/><rect x="31.55" y="28.90" width="3.6" height="3.6" fill="#1f4470"/><rect x="36.60" y="28.90" width="3.6" height="3.6" fill="#1f4470"/><rect x="6.30" y="35.20" width="3.6" height="3.6" fill="#1f4470"/><rect x="11.35" y="35.20" width="3.6" height="3.6" fill="#1f4470"/><rect x="16.40" y="35.20" width="3.6" height="3.6" fill="#1f4470"/><rect x="21.45" y="35.20" width="3.6" height="3.6" fill="#1f4470"/><rect x="26.50" y="35.20" width="3.6" height="3.6" fill="#1f4470"/><rect x="31.55" y="35.20" width="3.6" height="3.6" fill="#1f4470"/><rect x="36.60" y="35.20" width="3.6" height="3.6" fill="#1f4470"/>
</svg>
<div class="t" style="left:143.00px;top:368.26px;font-size:13.4px;color:#444;">Pressure (cmH2O)</div>
<svg style="left:261px;top:366.5px" width="320" height="17"><defs><pattern id="ph" patternUnits="userSpaceOnUse" width="20" height="20"><path d="M0 16 L16 0" stroke="#00a8ec" stroke-width="1.3"/></pattern></defs><rect x="0.8" y="0.8" width="15.68" height="14.4" fill="#fff" stroke="#00a8ec" stroke-width="1.6"/><path d="M3 14 L14.7 2" stroke="#00a8ec" stroke-width="1.3"/><rect x="16.68" y="0" width="16.98" height="16" fill="#00a8ec"/><rect x="33.36" y="0" width="16.98" height="16" fill="#10aed6"/><rect x="50.04" y="0" width="16.98" height="16" fill="#2cb6c2"/><rect x="66.72" y="0" width="16.98" height="16" fill="#4ec0aa"/><rect x="83.40" y="0" width="16.98" height="16" fill="#6cc790"/><rect x="100.08" y="0" width="16.98" height="16" fill="#87cd7c"/><rect x="116.76" y="0" width="16.98" height="16" fill="#a3d46b"/><rect x="133.44" y="0" width="16.98" height="16" fill="#bfdc5a"/><rect x="150.12" y="0" width="16.98" height="16" fill="#dbe34a"/><rect x="166.80" y="0" width="16.98" height="16" fill="#f7e62f"/><rect x="183.48" y="0" width="16.98" height="16" fill="#fccc2c"/><rect x="200.16" y="0" width="16.98" height="16" fill="#fdb427"/><rect x="216.84" y="0" width="16.98" height="16" fill="#fc9c22"/><rect x="233.52" y="0" width="16.98" height="16" fill="#fb841e"/><rect x="250.20" y="0" width="16.98" height="16" fill="#fa6c1a"/><rect x="266.88" y="0" width="16.98" height="16" fill="#f95416"/><rect x="283.56" y="0" width="16.98" height="16" fill="#f63c12"/><rect x="301.04" y="0.8" width="15.08" height="14.4" fill="#fff" stroke="#f63c12" stroke-width="1.6"/><path d="M303.2 14 L314.9 2" stroke="#f63c12" stroke-width="1.3"/></svg>
<div class="t" style="left:-30.66px;width:600px;text-align:center;top:351.67px;font-size:12.2px;color:#444;">&lt;</div>
<div class="t" style="left:-13.98px;width:600px;text-align:center;top:351.67px;font-size:12.2px;color:#444;">4</div>
<div class="t" style="left:2.70px;width:600px;text-align:center;top:351.67px;font-size:12.2px;color:#444;">5</div>
<div class="t" style="left:19.38px;width:600px;text-align:center;top:351.67px;font-size:12.2px;color:#444;">6</div>
<div class="t" style="left:36.06px;width:600px;text-align:center;top:351.67px;font-size:12.2px;color:#444;">7</div>
<div class="t" style="left:52.74px;width:600px;text-align:center;top:351.67px;font-size:12.2px;color:#444;">8</div>
<div class="t" style="left:69.42px;width:600px;text-align:center;top:351.67px;font-size:12.2px;color:#444;">9</div>
<div class="t" style="left:86.10px;width:600px;text-align:center;top:351.67px;font-size:12.2px;color:#444;">10</div>
<div class="t" style="left:102.78px;width:600px;text-align:center;top:351.67px;font-size:12.2px;color:#444;">11</div>
<div class="t" style="left:119.46px;width:600px;text-align:center;top:351.67px;font-size:12.2px;color:#444;">12</div>
<div class="t" style="left:136.14px;width:600px;text-align:center;top:351.67px;font-size:12.2px;color:#444;">13</div>
<div class="t" style="left:152.82px;width:600px;text-align:center;top:351.67px;font-size:12.2px;color:#444;">14</div>
<div class="t" style="left:169.50px;width:600px;text-align:center;top:351.67px;font-size:12.2px;color:#444;">15</div>
<div class="t" style="left:186.18px;width:600px;text-align:center;top:351.67px;font-size:12.2px;color:#444;">16</div>
<div class="t" style="left:202.86px;width:600px;text-align:center;top:351.67px;font-size:12.2px;color:#444;">17</div>
<div class="t" style="left:219.54px;width:600px;text-align:center;top:351.67px;font-size:12.2px;color:#444;">18</div>
<div class="t" style="left:236.22px;width:600px;text-align:center;top:351.67px;font-size:12.2px;color:#444;">19</div>
<div class="t" style="left:252.90px;width:600px;text-align:center;top:351.67px;font-size:12.2px;color:#444;">20</div>
<div class="t" style="left:269.58px;width:600px;text-align:center;top:351.67px;font-size:12.2px;color:#444;">&gt;</div>
<div class="r" style="left:142.5px;top:389.3px;width:557px;height:24.5px;border:1.3px solid #d2d2d2;border-radius:5px;"></div>
<div class="r" style="left:142.5px;top:416.8px;width:557px;height:24.5px;border:1.3px solid #d2d2d2;border-radius:5px;"></div>
<div class="r" style="left:142.5px;top:444.4px;width:557px;height:24.5px;border:1.3px solid #d2d2d2;border-radius:5px;"></div>
<div class="r" style="left:149.2px;top:393.2px;width:15px;height:15px;background:#d4e67c;border:1px solid #a8a8a8;"></div>
<div class="t" style="left:172.00px;top:395.14px;font-size:13.3px;color:#444;">&lt; 10/h</div>
<div class="r" style="left:219.5px;top:393.2px;width:15px;height:15px;background:#ff0000;border:1px solid #a8a8a8;"></div>
<div class="t" style="left:241.80px;top:395.14px;font-size:13.3px;color:#444;">≥ 10/h</div>
<div class="t" style="left:464.00px;top:395.14px;font-size:13.3px;color:#444;">AHI : OBS AH + CNT AH</div>
<div class="r" style="left:149.2px;top:420.6px;width:15px;height:15px;background:#d4e67c;border:1px solid #a8a8a8;"></div>
<div class="t" style="left:172.00px;top:421.34px;font-size:13.3px;color:#444;">≤ 5%</div>
<div class="r" style="left:219.5px;top:420.6px;width:15px;height:15px;background:#ff0000;border:1px solid #a8a8a8;"></div>
<div class="t" style="left:241.80px;top:421.34px;font-size:13.3px;color:#444;">&gt; 5%</div>
<div class="t" style="left:464.00px;top:421.34px;font-size:13.3px;color:#444;">% of time over the limit leak (%LK)</div>
<div class="r" style="left:149.2px;top:448.4px;width:15px;height:15px;background:#d4e67c;border:1px solid #a8a8a8;"></div>
<div class="t" style="left:172.00px;top:450.34px;font-size:13.3px;color:#444;">≥ 4h</div>
<div class="r" style="left:219.5px;top:448.4px;width:15px;height:15px;background:#fcaa5c;border:1px solid #a8a8a8;"></div>
<div class="t" style="left:242.00px;top:450.34px;font-size:13.3px;color:#444;">2 - 4 h</div>
<div class="r" style="left:289.5px;top:448.4px;width:15px;height:15px;background:#ff0000;border:1px solid #a8a8a8;"></div>
<div class="t" style="left:312.00px;top:450.34px;font-size:13.3px;color:#444;">&lt;  2h</div>
<div class="t" style="left:464.00px;top:450.34px;font-size:13.3px;color:#444;">DUT : Minimum compliance threshold</div>
<div class="r" style="left:143.8px;top:482.7px;width:751px;height:21.7px;background:#f3f3f3;"></div>
<div class="r" style="left:143.8px;top:482.7px;width:67px;height:21.7px;background:#e6e6e6;"></div>
<div class="r" style="left:393.5px;top:482.7px;width:20.86px;height:21.7px;background:#e9e9e9;"></div>
<div class="r" style="left:393.5px;top:504.4px;width:20.86px;height:367.08px;background:#f4f4f4;"></div>
<div class="r" style="left:435.22px;top:482.7px;width:20.86px;height:21.7px;background:#e9e9e9;"></div>
<div class="r" style="left:435.22px;top:504.4px;width:20.86px;height:367.08px;background:#f4f4f4;"></div>
<div class="r" style="left:476.94px;top:482.7px;width:20.86px;height:21.7px;background:#e9e9e9;"></div>
<div class="r" style="left:476.94px;top:504.4px;width:20.86px;height:367.08px;background:#f4f4f4;"></div>
<div class="r" style="left:518.66px;top:482.7px;width:20.86px;height:21.7px;background:#e9e9e9;"></div>
<div class="r" style="left:518.66px;top:504.4px;width:20.86px;height:367.08px;background:#f4f4f4;"></div>
<div class="r" style="left:560.38px;top:482.7px;width:20.86px;height:21.7px;background:#e9e9e9;"></div>
<div class="r" style="left:560.38px;top:504.4px;width:20.86px;height:367.08px;background:#f4f4f4;"></div>
<div class="r" style="left:602.1px;top:482.7px;width:20.86px;height:21.7px;background:#e9e9e9;"></div>
<div class="r" style="left:602.1px;top:504.4px;width:20.86px;height:367.08px;background:#f4f4f4;"></div>
<div class="r" style="left:643.8199999999999px;top:482.7px;width:20.86px;height:21.7px;background:#e9e9e9;"></div>
<div class="r" style="left:643.8199999999999px;top:504.4px;width:20.86px;height:367.08px;background:#f4f4f4;"></div>
<div class="r" style="left:685.54px;top:482.7px;width:20.86px;height:21.7px;background:#e9e9e9;"></div>
<div class="r" style="left:685.54px;top:504.4px;width:20.86px;height:367.08px;background:#f4f4f4;"></div>
<div class="r" style="left:727.26px;top:482.7px;width:20.86px;height:21.7px;background:#e9e9e9;"></div>
<div class="r" style="left:727.26px;top:504.4px;width:20.86px;height:367.08px;background:#f4f4f4;"></div>
<div class="r" style="left:768.98px;top:482.7px;width:20.86px;height:21.7px;background:#e9e9e9;"></div>
<div class="r" style="left:768.98px;top:504.4px;width:20.86px;height:367.08px;background:#f4f4f4;"></div>
<div class="r" style="left:810.7px;top:482.7px;width:20.86px;height:21.7px;background:#e9e9e9;"></div>
<div class="r" style="left:810.7px;top:504.4px;width:20.86px;height:367.08px;background:#f4f4f4;"></div>
<div class="r" style="left:852.42px;top:482.7px;width:20.86px;height:21.7px;background:#e9e9e9;"></div>
<div class="r" style="left:852.42px;top:504.4px;width:20.86px;height:367.08px;background:#f4f4f4;"></div>
<div class="t" style="left:149.50px;top:487.34px;font-size:13.3px;color:#555;">Date</div>
<div class="t" style="left:-6.50px;width:600px;text-align:center;top:486.82px;font-size:11.2px;color:#555;">AHI</div>
<div class="t" style="left:32.00px;width:600px;text-align:center;top:486.82px;font-size:11.2px;color:#555;">%LK</div>
<div class="t" style="left:65.50px;width:600px;text-align:center;top:486.82px;font-size:11.2px;color:#555;">DUT</div>
<div class="t" style="left:103.93px;width:600px;text-align:center;top:487.89px;font-size:12.3px;color:#555;">12</div>
<div class="t" style="left:124.79px;width:600px;text-align:center;top:487.89px;font-size:12.3px;color:#555;">13</div>
<div class="t" style="left:145.65px;width:600px;text-align:center;top:487.89px;font-size:12.3px;color:#555;">14</div>
<div class="t" style="left:166.51px;width:600px;text-align:center;top:487.89px;font-size:12.3px;color:#555;">15</div>
<div class="t" style="left:187.37px;width:600px;text-align:center;top:487.89px;font-size:12.3px;color:#555;">16</div>
<div class="t" style="left:208.23px;width:600px;text-align:center;top:487.89px;font-size:12.3px;color:#555;">17</div>
<div class="t" style="left:229.09px;width:600px;text-align:center;top:487.89px;font-size:12.3px;color:#555;">18</div>
<div class="t" style="left:249.95px;width:600px;text-align:center;top:487.89px;font-size:12.3px;color:#555;">19</div>
<div class="t" style="left:270.81px;width:600px;text-align:center;top:487.89px;font-size:12.3px;color:#555;">20</div>
<div class="t" style="left:291.67px;width:600px;text-align:center;top:487.89px;font-size:12.3px;color:#555;">21</div>
<div class="t" style="left:312.53px;width:600px;text-align:center;top:487.89px;font-size:12.3px;color:#555;">22</div>
<div class="t" style="left:333.39px;width:600px;text-align:center;top:487.89px;font-size:12.3px;color:#555;">23</div>
<div class="t" style="left:354.25px;width:600px;text-align:center;top:487.89px;font-size:12.3px;color:#555;">00</div>
<div class="t" style="left:375.11px;width:600px;text-align:center;top:487.89px;font-size:12.3px;color:#555;">01</div>
<div class="t" style="left:395.97px;width:600px;text-align:center;top:487.89px;font-size:12.3px;color:#555;">02</div>
<div class="t" style="left:416.83px;width:600px;text-align:center;top:487.89px;font-size:12.3px;color:#555;">03</div>
<div class="t" style="left:437.69px;width:600px;text-align:center;top:487.89px;font-size:12.3px;color:#555;">04</div>
<div class="t" style="left:458.55px;width:600px;text-align:center;top:487.89px;font-size:12.3px;color:#555;">05</div>
<div class="t" style="left:479.41px;width:600px;text-align:center;top:487.89px;font-size:12.3px;color:#555;">06</div>
<div class="t" style="left:500.27px;width:600px;text-align:center;top:487.89px;font-size:12.3px;color:#555;">07</div>
<div class="t" style="left:521.13px;width:600px;text-align:center;top:487.89px;font-size:12.3px;color:#555;">08</div>
<div class="t" style="left:541.99px;width:600px;text-align:center;top:487.89px;font-size:12.3px;color:#555;">09</div>
<div class="t" style="left:562.85px;width:600px;text-align:center;top:487.89px;font-size:12.3px;color:#555;">10</div>
<div class="t" style="left:583.71px;width:600px;text-align:center;top:487.89px;font-size:12.3px;color:#555;">11</div>
<div class="r" style="left:147.4px;top:504.4px;width:63.5px;height:17.48px;background:#dfe6ea;"></div>
<div class="r" style="left:211px;top:504.4px;width:20px;height:17.48px;background:#f5f9fc;"></div>
<div class="t" style="left:148.50px;top:507.14px;font-size:13.3px;color:#555;">11/05/2022</div>
<div class="t" style="left:213.60px;top:507.14px;font-size:12px;color:#151515;">HD</div>
<div class="r" style="left:286.5px;top:507.0px;width:14.4px;height:11.4px;background:#d4e67c;border:1px solid #a8a8a8;"></div>
<div class="r" style="left:322.5px;top:507.0px;width:14.4px;height:11.4px;background:#d4e67c;border:1px solid #a8a8a8;"></div>
<div class="r" style="left:359px;top:507.0px;width:14.4px;height:11.4px;background:#d4e67c;border:1px solid #a8a8a8;"></div>
<div class="r" style="left:143.8px;top:521.28px;width:751px;height:1.2px;background:#e6e6e6;"></div>
<div class="r" style="left:147.4px;top:521.88px;width:63.5px;height:17.48px;background:#dfe6ea;"></div>
<div class="r" style="left:211px;top:521.88px;width:20px;height:17.48px;background:#f5f9fc;"></div>
<div class="t" style="left:148.50px;top:524.62px;font-size:13.3px;color:#555;">12/05/2022</div>
<div class="t" style="left:213.60px;top:524.62px;font-size:12px;color:#151515;">HD</div>
<div class="r" style="left:286.5px;top:524.48px;width:14.4px;height:11.4px;background:#d4e67c;border:1px solid #a8a8a8;"></div>
<div class="r" style="left:322.5px;top:524.48px;width:14.4px;height:11.4px;background:#d4e67c;border:1px solid #a8a8a8;"></div>
<div class="r" style="left:359px;top:524.48px;width:14.4px;height:11.4px;background:#ff0000;border:1px solid #a8a8a8;"></div>
<div class="r" style="left:143.8px;top:538.76px;width:751px;height:1.2px;background:#e6e6e6;"></div>
<div class="r" style="left:147.4px;top:539.36px;width:63.5px;height:17.48px;background:#dfe6ea;"></div>
<div class="r" style="left:211px;top:539.36px;width:20px;height:17.48px;background:#f5f9fc;"></div>
<div class="t" style="left:148.50px;top:542.10px;font-size:13.3px;color:#555;">13/05/2022</div>
<div class="t" style="left:213.60px;top:542.10px;font-size:12px;color:#151515;">HD</div>
<div class="r" style="left:286.5px;top:541.96px;width:14.4px;height:11.4px;background:#d4e67c;border:1px solid #a8a8a8;"></div>
<div class="r" style="left:322.5px;top:541.96px;width:14.4px;height:11.4px;background:#d4e67c;border:1px solid #a8a8a8;"></div>
<div class="r" style="left:359px;top:541.96px;width:14.4px;height:11.4px;background:#ff0000;border:1px solid #a8a8a8;"></div>
<div class="r" style="left:143.8px;top:556.24px;width:751px;height:1.2px;background:#e6e6e6;"></div>
<div class="r" style="left:147.4px;top:556.8399999999999px;width:63.5px;height:17.48px;background:#dfe6ea;"></div>
<div class="r" style="left:211px;top:556.8399999999999px;width:20px;height:17.48px;background:#f5f9fc;"></div>
<div class="t" style="left:148.50px;top:559.58px;font-size:13.3px;color:#555;">14/05/2022</div>
<div class="t" style="left:213.60px;top:559.58px;font-size:12px;color:#151515;">HD</div>
<div class="r" style="left:286.5px;top:559.4399999999999px;width:14.4px;height:11.4px;background:#d4e67c;border:1px solid #a8a8a8;"></div>
<div class="r" style="left:322.5px;top:559.4399999999999px;width:14.4px;height:11.4px;background:#d4e67c;border:1px solid #a8a8a8;"></div>
<div class="r" style="left:359px;top:559.4399999999999px;width:14.4px;height:11.4px;background:#ff0000;border:1px solid #a8a8a8;"></div>
<div class="r" style="left:143.8px;top:573.7199999999999px;width:751px;height:1.2px;background:#e6e6e6;"></div>
<div class="r" style="left:147.4px;top:574.3199999999999px;width:63.5px;height:17.48px;background:#dfe6ea;"></div>
<div class="r" style="left:211px;top:574.3199999999999px;width:20px;height:17.48px;background:#f5f9fc;"></div>
<div class="t" style="left:148.50px;top:577.06px;font-size:13.3px;color:#555;">15/05/2022</div>
<div class="t" style="left:213.60px;top:577.06px;font-size:12px;color:#151515;">HD</div>
<div class="r" style="left:286.5px;top:576.92px;width:14.4px;height:11.4px;background:#d4e67c;border:1px solid #a8a8a8;"></div>
<div class="r" style="left:322.5px;top:576.92px;width:14.4px;height:11.4px;background:#d4e67c;border:1px solid #a8a8a8;"></div>
<div class="r" style="left:359px;top:576.92px;width:14.4px;height:11.4px;background:#fcaa5c;border:1px solid #a8a8a8;"></div>
<div class="r" style="left:143.8px;top:591.1999999999999px;width:751px;height:1.4px;background:#b4b4b4;"></div>
<div class="r" style="left:147.4px;top:591.8px;width:63.5px;height:17.48px;background:#dfe6ea;"></div>
<div class="r" style="left:211px;top:591.8px;width:20px;height:17.48px;background:#f5f9fc;"></div>
<div class="t" style="left:148.50px;top:594.54px;font-size:13.3px;color:#555;">16/05/2022</div>
<div class="t" style="left:213.60px;top:594.54px;font-size:12px;color:#151515;">HD</div>
<div class="r" style="left:286.5px;top:594.4px;width:14.4px;height:11.4px;background:#d4e67c;border:1px solid #a8a8a8;"></div>
<div class="r" style="left:322.5px;top:594.4px;width:14.4px;height:11.4px;background:#d4e67c;border:1px solid #a8a8a8;"></div>
<div class="r" style="left:359px;top:594.4px;width:14.4px;height:11.4px;background:#fcaa5c;border:1px solid #a8a8a8;"></div>
<div class="r" style="left:143.8px;top:608.68px;width:751px;height:1.2px;background:#e6e6e6;"></div>
<div class="r" style="left:147.4px;top:609.28px;width:63.5px;height:17.48px;background:#dfe6ea;"></div>
<div class="r" style="left:211px;top:609.28px;width:20px;height:17.48px;background:#f5f9fc;"></div>
<div class="t" style="left:148.50px;top:612.02px;font-size:13.3px;color:#555;">17/05/2022</div>
<div class="t" style="left:213.60px;top:612.02px;font-size:12px;color:#151515;">HD</div>
<div class="r" style="left:286.5px;top:611.88px;width:14.4px;height:11.4px;background:#d4e67c;border:1px solid #a8a8a8;"></div>
<div class="r" style="left:322.5px;top:611.88px;width:14.4px;height:11.4px;background:#d4e67c;border:1px solid #a8a8a8;"></div>
<div class="r" style="left:359px;top:611.88px;width:14.4px;height:11.4px;background:#fcaa5c;border:1px solid #a8a8a8;"></div>
<div class="r" style="left:143.8px;top:626.16px;width:751px;height:1.2px;background:#e6e6e6;"></div>
<div class="r" style="left:147.4px;top:626.76px;width:63.5px;height:17.48px;background:#dfe6ea;"></div>
<div class="r" style="left:211px;top:626.76px;width:20px;height:17.48px;background:#f5f9fc;"></div>
<div class="t" style="left:148.50px;top:629.50px;font-size:13.3px;color:#555;">18/05/2022</div>
<div class="t" style="left:213.60px;top:629.50px;font-size:12px;color:#151515;">HD</div>
<div class="r" style="left:286.5px;top:629.36px;width:14.4px;height:11.4px;background:#d4e67c;border:1px solid #a8a8a8;"></div>
<div class="r" style="left:322.5px;top:629.36px;width:14.4px;height:11.4px;background:#d4e67c;border:1px solid #a8a8a8;"></div>
<div class="r" style="left:359px;top:629.36px;width:14.4px;height:11.4px;background:#fcaa5c;border:1px solid #a8a8a8;"></div>
<div class="r" style="left:143.8px;top:643.64px;width:751px;height:1.2px;background:#e6e6e6;"></div>
<div class="r" style="left:147.4px;top:644.24px;width:63.5px;height:17.48px;background:#dfe6ea;"></div>
<div class="r" style="left:211px;top:644.24px;width:20px;height:17.48px;background:#f5f9fc;"></div>
<div class="t" style="left:148.50px;top:646.98px;font-size:13.3px;color:#555;">19/05/2022</div>
<div class="t" style="left:213.60px;top:646.98px;font-size:12px;color:#151515;">HD</div>
<div class="r" style="left:286.5px;top:646.84px;width:14.4px;height:11.4px;background:#d4e67c;border:1px solid #a8a8a8;"></div>
<div class="r" style="left:322.5px;top:646.84px;width:14.4px;height:11.4px;background:#ff0000;border:1px solid #a8a8a8;"></div>
<div class="r" style="left:359px;top:646.84px;width:14.4px;height:11.4px;background:#ff0000;border:1px solid #a8a8a8;"></div>
<div class="r" style="left:143.8px;top:661.12px;width:751px;height:1.2px;background:#e6e6e6;"></div>
<div class="r" style="left:147.4px;top:661.72px;width:63.5px;height:17.48px;background:#dfe6ea;"></div>
<div class="r" style="left:211px;top:661.72px;width:20px;height:17.48px;background:#f5f9fc;"></div>
<div class="t" style="left:148.50px;top:664.46px;font-size:13.3px;color:#555;">20/05/2022</div>
<div class="t" style="left:213.60px;top:664.46px;font-size:12px;color:#151515;">HD</div>
<div class="r" style="left:286.5px;top:664.32px;width:14.4px;height:11.4px;background:#d4e67c;border:1px solid #a8a8a8;"></div>
<div class="r" style="left:322.5px;top:664.32px;width:14.4px;height:11.4px;background:#d4e67c;border:1px solid #a8a8a8;"></div>
<div class="r" style="left:359px;top:664.32px;width:14.4px;height:11.4px;background:#fcaa5c;border:1px solid #a8a8a8;"></div>
<div class="r" style="left:143.8px;top:678.6px;width:751px;height:1.2px;background:#e6e6e6;"></div>
<div class="r" style="left:147.4px;top:679.2px;width:63.5px;height:17.48px;background:#dfe6ea;"></div>
<div class="r" style="left:211px;top:679.2px;width:20px;height:17.48px;background:#f5f9fc;"></div>
<div class="t" style="left:148.50px;top:681.94px;font-size:13.3px;color:#555;">21/05/2022</div>
<div class="t" style="left:213.60px;top:681.94px;font-size:12px;color:#151515;">HD</div>
<div class="r" style="left:286.5px;top:681.8000000000001px;width:14.4px;height:11.4px;background:#d4e67c;border:1px solid #a8a8a8;"></div>
<div class="r" style="left:322.5px;top:681.8000000000001px;width:14.4px;height:11.4px;background:#d4e67c;border:1px solid #a8a8a8;"></div>
<div class="r" style="left:359px;top:681.8000000000001px;width:14.4px;height:11.4px;background:#ff0000;border:1px solid #a8a8a8;"></div>
<div class="r" style="left:143.8px;top:696.08px;width:751px;height:1.2px;background:#e6e6e6;"></div>
<div class="r" style="left:147.4px;top:696.68px;width:63.5px;height:17.48px;background:#dfe6ea;"></div>
<div class="r" style="left:211px;top:696.68px;width:20px;height:17.48px;background:#f5f9fc;"></div>
<div class="t" style="left:148.50px;top:699.42px;font-size:13.3px;color:#555;">22/05/2022</div>
<div class="t" style="left:213.60px;top:699.42px;font-size:12px;color:#151515;">HD</div>
<div class="r" style="left:286.5px;top:699.28px;width:14.4px;height:11.4px;background:#d4e67c;border:1px solid #a8a8a8;"></div>
<div class="r" style="left:322.5px;top:699.28px;width:14.4px;height:11.4px;background:#d4e67c;border:1px solid #a8a8a8;"></div>
<div class="r" style="left:359px;top:699.28px;width:14.4px;height:11.4px;background:#fcaa5c;border:1px solid #a8a8a8;"></div>
<div class="r" style="left:143.8px;top:713.56px;width:751px;height:1.4px;background:#b4b4b4;"></div>
<div class="r" style="left:147.4px;top:714.16px;width:63.5px;height:17.48px;background:#dfe6ea;"></div>
<div class="r" style="left:211px;top:714.16px;width:20px;height:17.48px;background:#f5f9fc;"></div>
<div class="t" style="left:148.50px;top:716.90px;font-size:13.3px;color:#555;">23/05/2022</div>
<div class="t" style="left:213.60px;top:716.90px;font-size:12px;color:#151515;">HD</div>
<div class="r" style="left:286.5px;top:716.76px;width:14.4px;height:11.4px;background:#d4e67c;border:1px solid #a8a8a8;"></div>
<div class="r" style="left:322.5px;top:716.76px;width:14.4px;height:11.4px;background:#d4e67c;border:1px solid #a8a8a8;"></div>
<div class="r" style="left:359px;top:716.76px;width:14.4px;height:11.4px;background:#d4e67c;border:1px solid #a8a8a8;"></div>
<div class="r" style="left:143.8px;top:731.04px;width:751px;height:1.2px;background:#e6e6e6;"></div>
<div class="r" style="left:147.4px;top:731.64px;width:63.5px;height:17.48px;background:#dfe6ea;"></div>
<div class="r" style="left:211px;top:731.64px;width:20px;height:17.48px;background:#f5f9fc;"></div>
<div class="t" style="left:148.50px;top:734.38px;font-size:13.3px;color:#555;">24/05/2022</div>
<div class="t" style="left:213.60px;top:734.38px;font-size:12px;color:#151515;">HD</div>
<div class="r" style="left:286.5px;top:734.24px;width:14.4px;height:11.4px;background:#d4e67c;border:1px solid #a8a8a8;"></div>
<div class="r" style="left:322.5px;top:734.24px;width:14.4px;height:11.4px;background:#d4e67c;border:1px solid #a8a8a8;"></div>
<div class="r" style="left:359px;top:734.24px;width:14.4px;height:11.4px;background:#fcaa5c;border:1px solid #a8a8a8;"></div>
<div class="r" style="left:143.8px;top:748.52px;width:751px;height:1.2px;background:#e6e6e6;"></div>
<div class="r" style="left:147.4px;top:749.12px;width:63.5px;height:17.48px;background:#dfe6ea;"></div>
<div class="r" style="left:211px;top:749.12px;width:20px;height:17.48px;background:#f5f9fc;"></div>
<div class="t" style="left:148.50px;top:751.86px;font-size:13.3px;color:#555;">25/05/2022</div>
<div class="t" style="left:213.60px;top:751.86px;font-size:12px;color:#151515;">HD</div>
<div class="r" style="left:286.5px;top:751.72px;width:14.4px;height:11.4px;background:#d4e67c;border:1px solid #a8a8a8;"></div>
<div class="r" style="left:322.5px;top:751.72px;width:14.4px;height:11.4px;background:#d4e67c;border:1px solid #a8a8a8;"></div>
<div class="r" style="left:359px;top:751.72px;width:14.4px;height:11.4px;background:#d4e67c;border:1px solid #a8a8a8;"></div>
<div class="r" style="left:143.8px;top:766.0px;width:751px;height:1.2px;background:#e6e6e6;"></div>
<div class="r" style="left:147.4px;top:766.5999999999999px;width:63.5px;height:17.48px;background:#dfe6ea;"></div>
<div class="r" style="left:211px;top:766.5999999999999px;width:20px;height:17.48px;background:#f5f9fc;"></div>
<div class="t" style="left:148.50px;top:769.34px;font-size:13.3px;color:#555;">26/05/2022</div>
<div class="t" style="left:213.60px;top:769.34px;font-size:12px;color:#151515;">HD</div>
<div class="r" style="left:286.5px;top:769.1999999999999px;width:14.4px;height:11.4px;background:#d4e67c;border:1px solid #a8a8a8;"></div>
<div class="r" style="left:322.5px;top:769.1999999999999px;width:14.4px;height:11.4px;background:#d4e67c;border:1px solid #a8a8a8;"></div>
<div class="r" style="left:359px;top:769.1999999999999px;width:14.4px;height:11.4px;background:#fcaa5c;border:1px solid #a8a8a8;"></div>
<div class="r" style="left:143.8px;top:783.4799999999999px;width:751px;height:1.2px;background:#e6e6e6;"></div>
<div class="r" style="left:147.4px;top:784.0799999999999px;width:63.5px;height:17.48px;background:#dfe6ea;"></div>
<div class="r" style="left:211px;top:784.0799999999999px;width:20px;height:17.48px;background:#f5f9fc;"></div>
<div class="t" style="left:148.50px;top:786.82px;font-size:13.3px;color:#555;">27/05/2022</div>
<div class="t" style="left:213.60px;top:786.82px;font-size:12px;color:#151515;">HD</div>
<div class="r" style="left:286.5px;top:786.68px;width:14.4px;height:11.4px;background:#d4e67c;border:1px solid #a8a8a8;"></div>
<div class="r" style="left:322.5px;top:786.68px;width:14.4px;height:11.4px;background:#d4e67c;border:1px solid #a8a8a8;"></div>
<div class="r" style="left:359px;top:786.68px;width:14.4px;height:11.4px;background:#ff0000;border:1px solid #a8a8a8;"></div>
<div class="r" style="left:143.8px;top:800.9599999999999px;width:751px;height:1.2px;background:#e6e6e6;"></div>
<div class="r" style="left:147.4px;top:801.56px;width:63.5px;height:17.48px;background:#dfe6ea;"></div>
<div class="r" style="left:211px;top:801.56px;width:20px;height:17.48px;background:#f5f9fc;"></div>
<div class="t" style="left:148.50px;top:804.30px;font-size:13.3px;color:#555;">28/05/2022</div>
<div class="t" style="left:213.60px;top:804.30px;font-size:12px;color:#151515;">HD</div>
<div class="r" style="left:286.5px;top:804.16px;width:14.4px;height:11.4px;background:#d4e67c;border:1px solid #a8a8a8;"></div>
<div class="r" style="left:322.5px;top:804.16px;width:14.4px;height:11.4px;background:#d4e67c;border:1px solid #a8a8a8;"></div>
<div class="r" style="left:359px;top:804.16px;width:14.4px;height:11.4px;background:#fcaa5c;border:1px solid #a8a8a8;"></div>
<div class="r" style="left:143.8px;top:818.4399999999999px;width:751px;height:1.2px;background:#e6e6e6;"></div>
<div class="r" style="left:147.4px;top:819.04px;width:63.5px;height:17.48px;background:#dfe6ea;"></div>
<div class="r" style="left:211px;top:819.04px;width:20px;height:17.48px;background:#f5f9fc;"></div>
<div class="t" style="left:148.50px;top:821.78px;font-size:13.3px;color:#555;">29/05/2022</div>
<div class="t" style="left:213.60px;top:821.78px;font-size:12px;color:#151515;">HD</div>
<div class="r" style="left:286.5px;top:821.64px;width:14.4px;height:11.4px;background:#d4e67c;border:1px solid #a8a8a8;"></div>
<div class="r" style="left:322.5px;top:821.64px;width:14.4px;height:11.4px;background:#d4e67c;border:1px solid #a8a8a8;"></div>
<div class="r" style="left:359px;top:821.64px;width:14.4px;height:11.4px;background:#fcaa5c;border:1px solid #a8a8a8;"></div>
<div class="r" style="left:143.8px;top:835.92px;width:751px;height:1.4px;background:#b4b4b4;"></div>
<div class="r" style="left:147.4px;top:836.52px;width:63.5px;height:17.48px;background:#dfe6ea;"></div>
<div class="r" style="left:211px;top:836.52px;width:20px;height:17.48px;background:#f5f9fc;"></div>
<div class="t" style="left:148.50px;top:839.26px;font-size:13.3px;color:#555;">30/05/2022</div>
<div class="t" style="left:213.60px;top:839.26px;font-size:12px;color:#151515;">HD</div>
<div class="r" style="left:286.5px;top:839.12px;width:14.4px;height:11.4px;background:#d4e67c;border:1px solid #a8a8a8;"></div>
<div class="r" style="left:322.5px;top:839.12px;width:14.4px;height:11.4px;background:#d4e67c;border:1px solid #a8a8a8;"></div>
<div class="r" style="left:359px;top:839.12px;width:14.4px;height:11.4px;background:#fcaa5c;border:1px solid #a8a8a8;"></div>
<div class="r" style="left:143.8px;top:853.4px;width:751px;height:1.2px;background:#e6e6e6;"></div>
<div class="r" style="left:147.4px;top:854.0px;width:63.5px;height:17.48px;background:#dfe6ea;"></div>
<div class="r" style="left:211px;top:854.0px;width:20px;height:17.48px;background:#f5f9fc;"></div>
<div class="t" style="left:148.50px;top:856.74px;font-size:13.3px;color:#555;">31/05/2022</div>
<div class="t" style="left:213.60px;top:856.74px;font-size:12px;color:#151515;">HD</div>
<div class="r" style="left:286.5px;top:856.6px;width:14.4px;height:11.4px;background:#d4e67c;border:1px solid #a8a8a8;"></div>
<div class="r" style="left:322.5px;top:856.6px;width:14.4px;height:11.4px;background:#d4e67c;border:1px solid #a8a8a8;"></div>
<div class="r" style="left:359px;top:856.6px;width:14.4px;height:11.4px;background:#fcaa5c;border:1px solid #a8a8a8;"></div>
<div class="r" style="left:143.8px;top:870.88px;width:751px;height:1.2px;background:#e6e6e6;"></div>
<div class="r" style="left:600px;top:505.4px;width:62.699999999999974px;height:15.6px;background:#00a8ec;"></div>
<div class="r" style="left:662.4px;top:505.4px;width:21.199999999999978px;height:15.6px;background:#10aed6;"></div>
<div class="r" style="left:683.3px;top:505.4px;width:22.10000000000007px;height:15.6px;background:#00a8ec;"></div>
<div class="r" style="left:705.1px;top:505.4px;width:62.699999999999974px;height:15.6px;background:#10aed6;"></div>
<div class="r" style="left:767.5px;top:505.4px;width:37.59999999999995px;height:15.6px;background:#00a8ec;"></div>
<div class="r" style="left:601.1px;top:522.88px;width:20.400000000000023px;height:15.6px;background:#10aed6;"></div>
<div class="r" style="left:621.2px;top:522.88px;width:163.8px;height:15.6px;background:#00a8ec;"></div>
<div class="r" style="left:612.4px;top:540.36px;width:21.500000000000046px;height:15.6px;background:#10aed6;"></div>
<div class="r" style="left:633.6px;top:540.36px;width:21.599999999999955px;height:15.6px;background:#00a8ec;"></div>
<div class="r" style="left:654.9px;top:540.36px;width:20.199999999999978px;height:15.6px;background:#2cb6c2;"></div>
<div class="r" style="left:674.8px;top:540.36px;width:21.60000000000007px;height:15.6px;background:#10aed6;"></div>
<div class="r" style="left:696.1px;top:540.36px;width:21.699999999999978px;height:15.6px;background:#00a8ec;"></div>
<div class="r" style="left:717.5px;top:540.36px;width:21.000000000000046px;height:15.6px;background:#10aed6;"></div>
<div class="r" style="left:738.2px;top:540.36px;width:20.999999999999932px;height:15.6px;background:#00a8ec;"></div>
<div class="r" style="left:758.9px;top:540.36px;width:17.400000000000023px;height:15.6px;background:#10aed6;"></div>
<div class="r" style="left:606.2px;top:557.8399999999999px;width:205.09999999999997px;height:15.6px;background:#00a8ec;"></div>
<div class="r" style="left:622.5px;top:575.3199999999999px;width:21.599999999999955px;height:15.6px;background:#00a8ec;"></div>
<div class="r" style="left:643.8px;top:575.3199999999999px;width:41.3px;height:15.6px;background:#4ec0aa;"></div>
<div class="r" style="left:684.8px;top:575.3199999999999px;width:62.90000000000002px;height:15.6px;background:#10aed6;"></div>
<div class="r" style="left:747.4px;top:575.3199999999999px;width:21.60000000000007px;height:15.6px;background:#2cb6c2;"></div>
<div class="r" style="left:768.7px;top:575.3199999999999px;width:24.89999999999991px;height:15.6px;background:#00a8ec;"></div>
<div class="r" style="left:637.4px;top:592.8px;width:20.400000000000023px;height:15.6px;background:#00a8ec;"></div>
<div class="r" style="left:657.5px;top:592.8px;width:42.59999999999995px;height:15.6px;background:#10aed6;"></div>
<div class="r" style="left:699.8px;top:592.8px;width:20.10000000000007px;height:15.6px;background:#6cc790;"></div>
<div class="r" style="left:719.6px;top:592.8px;width:42.99999999999993px;height:15.6px;background:#10aed6;"></div>
<div class="r" style="left:762.3px;top:592.8px;width:17.400000000000023px;height:15.6px;background:#00a8ec;"></div>
<div class="r" style="left:623.5px;top:610.28px;width:20.400000000000023px;height:15.6px;background:#00a8ec;"></div>
<div class="r" style="left:643.6px;top:610.28px;width:21.699999999999978px;height:15.6px;background:#10aed6;"></div>
<div class="r" style="left:665px;top:610.28px;width:21.599999999999955px;height:15.6px;background:#00a8ec;"></div>
<div class="r" style="left:686.3px;top:610.28px;width:83.60000000000007px;height:15.6px;background:#10aed6;"></div>
<div class="r" style="left:769.6px;top:610.28px;width:10.099999999999955px;height:15.6px;background:#00a8ec;"></div>
<div class="r" style="left:625px;top:627.76px;width:21.699999999999978px;height:15.6px;background:#00a8ec;"></div>
<div class="r" style="left:646.4px;top:627.76px;width:21.199999999999978px;height:15.6px;background:#10aed6;"></div>
<div class="r" style="left:667.3px;top:627.76px;width:41.3px;height:15.6px;background:#2cb6c2;"></div>
<div class="r" style="left:708.3px;top:627.76px;width:66.50000000000004px;height:15.6px;background:#00a8ec;"></div>
<div class="r" style="left:618.6px;top:645.24px;width:21.699999999999978px;height:15.6px;background:#10aed6;"></div>
<div class="r" style="left:640px;top:645.24px;width:84.19999999999997px;height:15.6px;background:#00a8ec;"></div>
<div class="r" style="left:723.9px;top:645.24px;width:21.000000000000046px;height:15.6px;background:#10aed6;"></div>
<div class="r" style="left:744.6px;top:645.24px;width:16.3px;height:15.6px;background:#00a8ec;"></div>
<div class="r" style="left:635px;top:662.72px;width:20.199999999999978px;height:15.6px;background:#10aed6;"></div>
<div class="r" style="left:654.9px;top:662.72px;width:21.699999999999978px;height:15.6px;background:#2cb6c2;"></div>
<div class="r" style="left:676.3px;top:662.72px;width:21.60000000000007px;height:15.6px;background:#00a8ec;"></div>
<div class="r" style="left:697.6px;top:662.72px;width:20.199999999999978px;height:15.6px;background:#10aed6;"></div>
<div class="r" style="left:717.5px;top:662.72px;width:27.400000000000023px;height:15.6px;background:#00a8ec;"></div>
<div class="r" style="left:647px;top:680.2px;width:20.400000000000023px;height:15.6px;background:#00a8ec;"></div>
<div class="r" style="left:670.9px;top:680.2px;width:20.60000000000007px;height:15.6px;background:#2cb6c2;"></div>
<div class="r" style="left:691.2px;top:680.2px;width:42.59999999999995px;height:15.6px;background:#10aed6;"></div>
<div class="r" style="left:733.5px;top:680.2px;width:67.59999999999995px;height:15.6px;background:#00a8ec;"></div>
<div class="r" style="left:623.2px;top:697.68px;width:22.3px;height:15.6px;background:#10aed6;"></div>
<div class="r" style="left:645.2px;top:697.68px;width:21.099999999999955px;height:15.6px;background:#2cb6c2;"></div>
<div class="r" style="left:666px;top:697.68px;width:20.099999999999955px;height:15.6px;background:#6cc790;"></div>
<div class="r" style="left:685.8px;top:697.68px;width:21.10000000000007px;height:15.6px;background:#10aed6;"></div>
<div class="r" style="left:706.6px;top:697.68px;width:63.49999999999993px;height:15.6px;background:#00a8ec;"></div>
<div class="r" style="left:769.8px;top:697.68px;width:4.900000000000023px;height:15.6px;background:#4ec0aa;"></div>
<div class="r" style="left:624.7px;top:715.16px;width:20.8px;height:15.6px;background:#00a8ec;"></div>
<div class="r" style="left:645.2px;top:715.16px;width:42.399999999999906px;height:15.6px;background:#10aed6;"></div>
<div class="r" style="left:687.3px;top:715.16px;width:20.20000000000009px;height:15.6px;background:#00a8ec;"></div>
<div class="r" style="left:707.2px;top:715.16px;width:42.49999999999993px;height:15.6px;background:#10aed6;"></div>
<div class="r" style="left:749.4px;top:715.16px;width:20.699999999999978px;height:15.6px;background:#2cb6c2;"></div>
<div class="r" style="left:769.8px;top:715.16px;width:10.100000000000069px;height:15.6px;background:#00a8ec;"></div>
<div class="r" style="left:654.7px;top:732.64px;width:84.3px;height:15.6px;background:#00a8ec;"></div>
<div class="r" style="left:738.7px;top:732.64px;width:21.39999999999991px;height:15.6px;background:#2cb6c2;"></div>
<div class="r" style="left:759.8px;top:732.64px;width:20.10000000000007px;height:15.6px;background:#10aed6;"></div>
<div class="r" style="left:636px;top:750.12px;width:62.90000000000002px;height:15.6px;background:#00a8ec;"></div>
<div class="r" style="left:698.6px;top:750.12px;width:42.49999999999993px;height:15.6px;background:#4ec0aa;"></div>
<div class="r" style="left:740.8px;top:750.12px;width:20.20000000000009px;height:15.6px;background:#10aed6;"></div>
<div class="r" style="left:760.7px;top:750.12px;width:17.999999999999932px;height:15.6px;background:#00a8ec;"></div>
<div class="r" style="left:631.1px;top:767.5999999999999px;width:21.400000000000023px;height:15.6px;background:#10aed6;"></div>
<div class="r" style="left:652.2px;top:767.5999999999999px;width:41.59999999999995px;height:15.6px;background:#4ec0aa;"></div>
<div class="r" style="left:693.5px;top:767.5999999999999px;width:21.599999999999955px;height:15.6px;background:#00a8ec;"></div>
<div class="r" style="left:714.8px;top:767.5999999999999px;width:41.600000000000065px;height:15.6px;background:#10aed6;"></div>
<div class="r" style="left:756.1px;top:767.5999999999999px;width:13.999999999999932px;height:15.6px;background:#00a8ec;"></div>
<div class="r" style="left:644.9px;top:785.0799999999999px;width:104.8px;height:15.6px;background:#00a8ec;"></div>
<div class="r" style="left:749.4px;top:785.0799999999999px;width:20.699999999999978px;height:15.6px;background:#10aed6;"></div>
<div class="r" style="left:769.8px;top:785.0799999999999px;width:10.100000000000069px;height:15.6px;background:#2cb6c2;"></div>
<div class="r" style="left:636px;top:802.56px;width:21.099999999999955px;height:15.6px;background:#2cb6c2;"></div>
<div class="r" style="left:656.8px;top:802.56px;width:20.8px;height:15.6px;background:#10aed6;"></div>
<div class="r" style="left:677.3px;top:802.56px;width:62.90000000000002px;height:15.6px;background:#00a8ec;"></div>
<div class="r" style="left:739.9px;top:802.56px;width:21.699999999999978px;height:15.6px;background:#10aed6;"></div>
<div class="r" style="left:761.3px;top:802.56px;width:18.60000000000007px;height:15.6px;background:#2cb6c2;"></div>
<div class="r" style="left:625px;top:820.04px;width:21.400000000000023px;height:15.6px;background:#10aed6;"></div>
<div class="r" style="left:646.1px;top:820.04px;width:21.699999999999978px;height:15.6px;background:#2cb6c2;"></div>
<div class="r" style="left:667.5px;top:820.04px;width:20.099999999999955px;height:15.6px;background:#4ec0aa;"></div>
<div class="r" style="left:687.3px;top:820.04px;width:92.60000000000007px;height:15.6px;background:#00a8ec;"></div>
<div class="r" style="left:607.3px;top:837.52px;width:21.70000000000009px;height:15.6px;background:#10aed6;"></div>
<div class="r" style="left:628.7px;top:837.52px;width:20.099999999999955px;height:15.6px;background:#6cc790;"></div>
<div class="r" style="left:648.5px;top:837.52px;width:21.400000000000023px;height:15.6px;background:#2cb6c2;"></div>
<div class="r" style="left:669.6px;top:837.52px;width:101.49999999999993px;height:15.6px;background:#00a8ec;"></div>
<div class="r" style="left:625px;top:855.0px;width:41.3px;height:15.6px;background:#10aed6;"></div>
<div class="r" style="left:666px;top:855.0px;width:101.69999999999997px;height:15.6px;background:#00a8ec;"></div>
<div class="r" style="left:911.3px;top:504px;width:16.8px;height:508px;background:#f0f0f0;"></div>
<div class="r" style="left:918.6px;top:832px;width:1.3px;height:50.5px;background:#8a8a8a;"></div>
<div class="r" style="left:939px;top:299px;width:965.5px;height:33.5px;background:#4e7389;"></div>
<div class="t" style="left:1121.50px;width:600px;text-align:center;top:307.79px;font-size:16.2px;color:#fff;font-weight:700;">Statistical Report</div>
<div class="r" style="left:938px;top:332.5px;width:2px;height:682px;background:#7d99ad;"></div>
<div class="r" style="left:1903px;top:332.5px;width:1.4px;height:28px;background:#7d98aa;"></div>
<div class="r" style="left:1887px;top:360.3px;width:17.4px;height:654.5px;background:#f0f0f0;"></div>
<div class="r" style="left:1894.6px;top:381.5px;width:1.4px;height:348px;background:#8a8a8a;"></div>
<div class="r" style="left:939px;top:1013.3px;width:7px;height:1.5px;background:#5d7f96;"></div>
<div class="r" style="left:1410px;top:1013.3px;width:7px;height:1.5px;background:#5d7f96;"></div>
<div class="r" style="left:1882.5px;top:1013.3px;width:3px;height:1.5px;background:#5d7f96;"></div>
<div class="t" style="left:957.30px;top:362.36px;font-size:15.4px;color:#4a4a4a;">Analysis period: 29/03/2022 - 31/05/2022 (64 Selected day (s) / 99 Sessions)</div>
<div class="r" style="left:1127.5px;top:419px;width:158.3px;height:110.8px;background:#eceff1;border:1.6px solid #4e7389;"></div>
<div class="t" style="left:906.65px;width:600px;text-align:center;top:432.26px;font-size:14.1px;color:#4e7389;font-weight:700;">Duration (ON/OFF)</div>
<div class="t" style="left:906.65px;width:600px;text-align:center;top:457.44px;font-size:33.5px;color:#4e7389;font-weight:700;">6 h 36</div>
<div class="t" style="left:906.65px;width:600px;text-align:center;top:503.73px;font-size:14.5px;color:#4e7389;">h/d</div>
<div class="r" style="left:1292.45px;top:419px;width:158.3px;height:110.8px;background:#eceff1;border:1.6px solid #4e7389;"></div>
<div class="t" style="left:1071.60px;width:600px;text-align:center;top:432.03px;font-size:13.2px;color:#4e7389;font-weight:700;">AHI : AO, HO, AC, HC</div>
<div class="t" style="left:1066.60px;width:600px;text-align:center;top:457.44px;font-size:33.5px;color:#4e7389;font-weight:700;">6.5</div>
<div class="t" style="left:1071.60px;width:600px;text-align:center;top:503.73px;font-size:14.5px;color:#4e7389;">evts/h</div>
<div class="r" style="left:1457.4px;top:419px;width:158.3px;height:110.8px;background:#eceff1;border:1.6px solid #4e7389;"></div>
<div class="t" style="left:1236.55px;width:600px;text-align:center;top:432.26px;font-size:14.1px;color:#4e7389;font-weight:700;">L.90%</div>
<div class="t" style="left:1236.55px;width:600px;text-align:center;top:457.44px;font-size:33.5px;color:#4e7389;font-weight:700;">9</div>
<div class="t" style="left:1236.55px;width:600px;text-align:center;top:503.73px;font-size:14.5px;color:#4e7389;">l/min</div>
<div class="r" style="left:1622.35px;top:419px;width:158.3px;height:110.8px;background:#eceff1;border:1.6px solid #4e7389;"></div>
<div class="t" style="left:1401.50px;width:600px;text-align:center;top:432.26px;font-size:14.1px;color:#4e7389;font-weight:700;">P.90%</div>
<div class="t" style="left:1401.50px;width:600px;text-align:center;top:457.44px;font-size:33.5px;color:#4e7389;font-weight:700;">8.0</div>
<div class="t" style="left:1401.50px;width:600px;text-align:center;top:503.73px;font-size:14.5px;color:#4e7389;">cmH2O</div>
<div class="r" style="left:944.8px;top:573.5px;width:49.8px;height:2.3px;background:#3cc4f0;"></div>
<div class="t" style="left:957.50px;top:580.07px;font-size:14.8px;color:#5b8aa8;font-weight:700;">Latest settings for the period</div>
<div class="t" style="left:962.00px;top:602.45px;font-size:15.3px;color:#1a1a1a;">Mode</div>
<div class="t" style="left:1197.50px;top:602.45px;font-size:15.3px;color:#1a1a1a;font-weight:700;">A-PAP</div>
<div class="t" style="left:1412.00px;top:602.45px;font-size:15.3px;color:#1a1a1a;">Patient circuit</div>
<div class="t" style="left:1647.40px;top:602.45px;font-size:15.3px;color:#1a1a1a;font-weight:700;">Circuit select</div>
<div class="t" style="left:962.00px;top:623.65px;font-size:15.3px;color:#1a1a1a;">Min. pressure</div>
<div class="t" style="left:1197.50px;top:623.65px;font-size:15.3px;color:#1a1a1a;font-weight:700;">4.0</div>
<div class="t" style="left:1412.00px;top:623.65px;font-size:15.3px;color:#1a1a1a;">Theoretical mask leak</div>
<div class="t" style="left:1647.40px;top:623.65px;font-size:15.3px;color:#1a1a1a;font-weight:700;">36 lpm</div>
<div class="t" style="left:962.00px;top:644.85px;font-size:15.3px;color:#1a1a1a;">Max. pressure</div>
<div class="t" style="left:1197.50px;top:644.85px;font-size:15.3px;color:#1a1a1a;font-weight:700;">8.0</div>
<div class="t" style="left:1412.00px;top:644.85px;font-size:15.3px;color:#1a1a1a;">Humidifier</div>
<div class="t" style="left:1647.40px;top:644.85px;font-size:15.3px;color:#1a1a1a;font-weight:700;">Level 2</div>
<div class="t" style="left:962.00px;top:666.05px;font-size:15.3px;color:#1a1a1a;">Ramp</div>
<div class="t" style="left:1197.50px;top:666.05px;font-size:15.3px;color:#1a1a1a;font-weight:700;">45 min [I.Ramp]</div>
<div class="t" style="left:1412.00px;top:666.05px;font-size:15.3px;color:#1a1a1a;">Heated tube</div>
<div class="t" style="left:1647.40px;top:666.05px;font-size:15.3px;color:#1a1a1a;font-weight:700;">Missing</div>
<div class="t" style="left:962.00px;top:687.25px;font-size:15.3px;color:#1a1a1a;">Ramp pressure</div>
<div class="t" style="left:1197.50px;top:687.25px;font-size:15.3px;color:#1a1a1a;font-weight:700;">4.0</div>
<div class="t" style="left:1412.00px;top:687.25px;font-size:15.3px;color:#1a1a1a;">Comfort Control Plus</div>
<div class="t" style="left:1647.40px;top:687.25px;font-size:15.3px;color:#1a1a1a;font-weight:700;">Level 3(Ramp)</div>
<div class="r" style="left:944.8px;top:714.8px;width:49.8px;height:2.3px;background:#3cc4f0;"></div>
<div class="t" style="left:957.50px;top:720.77px;font-size:14.8px;color:#5b8aa8;font-weight:700;">Compliance information</div>
<div class="t" style="left:962.00px;top:743.15px;font-size:15.3px;color:#1a1a1a;">Duration (ON/OFF)</div>
<div class="t" style="left:1312.10px;top:743.15px;font-size:15.3px;color:#1a1a1a;font-weight:700;">6 h 36</div>
<div class="t" style="left:1417.20px;top:743.15px;font-size:15.3px;color:#1a1a1a;">Total usage time</div>
<div class="t" style="left:1767.40px;top:743.15px;font-size:15.3px;color:#1a1a1a;font-weight:700;">180 h 08</div>
<div class="t" style="left:962.00px;top:764.35px;font-size:15.3px;color:#1a1a1a;">Usage duration (h/d)</div>
<div class="t" style="left:1312.10px;top:764.35px;font-size:15.3px;color:#1a1a1a;font-weight:700;">2 h 48</div>
<div class="t" style="left:1417.20px;top:764.35px;font-size:15.3px;color:#1a1a1a;">Usage duration (h/d) / Days of usage</div>
<div class="t" style="left:1767.40px;top:764.35px;font-size:15.3px;color:#1a1a1a;font-weight:700;">2 h 48</div>
<div class="t" style="left:962.00px;top:785.55px;font-size:15.3px;color:#1a1a1a;">Duration of use without excessive leakage (h/d)</div>
<div class="t" style="left:1312.10px;top:785.55px;font-size:15.3px;color:#1a1a1a;font-weight:700;">2 h 48</div>
<div class="t" style="left:1417.20px;top:785.55px;font-size:15.3px;color:#1a1a1a;">Days without utilization</div>
<div class="t" style="left:1767.40px;top:785.55px;font-size:15.3px;color:#1a1a1a;font-weight:700;">0 (0%)</div>
<div class="t" style="left:962.00px;top:806.75px;font-size:15.3px;color:#1a1a1a;">Time in ramp (h/d)</div>
<div class="t" style="left:1312.10px;top:806.75px;font-size:15.3px;color:#1a1a1a;font-weight:700;">0 h 44</div>
<div class="t" style="left:1417.20px;top:806.75px;font-size:15.3px;color:#1a1a1a;">Days of usage</div>
<div class="t" style="left:1767.40px;top:806.75px;font-size:15.3px;color:#1a1a1a;font-weight:700;">64 (100%)</div>
<div class="t" style="left:962.00px;top:827.95px;font-size:15.3px;color:#1a1a1a;">% of time over the limit leak</div>
<div class="t" style="left:1312.10px;top:827.95px;font-size:15.3px;color:#1a1a1a;font-weight:700;">1.1%</div>
<div class="t" style="left:1417.20px;top:827.95px;font-size:15.3px;color:#1a1a1a;">Days of usage ≥ 4 h/d</div>
<div class="t" style="left:1767.40px;top:827.95px;font-size:15.3px;color:#1a1a1a;font-weight:700;">17 (27 %)</div>
<div class="t" style="left:962.00px;top:849.15px;font-size:15.3px;color:#1a1a1a;">Sessions / Days of usage</div>
<div class="t" style="left:1312.10px;top:849.15px;font-size:15.3px;color:#1a1a1a;font-weight:700;">1.5</div>
<div class="t" style="left:1417.20px;top:849.15px;font-size:15.3px;color:#1a1a1a;">Days of usage &lt; 4 h/d</div>
<div class="t" style="left:1767.40px;top:849.15px;font-size:15.3px;color:#1a1a1a;font-weight:700;">47 (73 %)</div>
<div class="r" style="left:944.8px;top:878.8px;width:49.8px;height:2.3px;background:#3cc4f0;"></div>
<div class="t" style="left:962.60px;top:888.80px;font-size:16.3px;color:#5b8aa8;font-weight:700;">Pressures</div>
<div class="t" style="left:1312.30px;top:888.80px;font-size:16.3px;color:#5b8aa8;font-weight:700;">cmH2O</div>
<div class="t" style="left:1417.60px;top:888.80px;font-size:16.3px;color:#5b8aa8;font-weight:700;">Unintentional leaks</div>
<div class="t" style="left:1767.50px;top:888.80px;font-size:16.3px;color:#5b8aa8;font-weight:700;">l/min</div>
<div class="t" style="left:962.60px;top:909.65px;font-size:15.3px;color:#1a1a1a;">Average</div>
<div class="t" style="left:1312.10px;top:909.65px;font-size:15.3px;color:#1a1a1a;font-weight:700;">4.9</div>
<div class="t" style="left:1417.60px;top:909.65px;font-size:15.3px;color:#1a1a1a;">Average</div>
<div class="t" style="left:1767.40px;top:909.65px;font-size:15.3px;color:#1a1a1a;font-weight:700;">4</div>
<div class="t" style="left:962.60px;top:930.85px;font-size:15.3px;color:#1a1a1a;">Median</div>
<div class="t" style="left:1312.10px;top:930.85px;font-size:15.3px;color:#1a1a1a;font-weight:700;">4.0</div>
<div class="t" style="left:1417.60px;top:930.85px;font-size:15.3px;color:#1a1a1a;">Median</div>
<div class="t" style="left:1767.40px;top:930.85px;font-size:15.3px;color:#1a1a1a;font-weight:700;">1</div>
<div class="t" style="left:962.60px;top:952.05px;font-size:15.3px;color:#1a1a1a;">Maximum</div>
<div class="t" style="left:1312.10px;top:952.05px;font-size:15.3px;color:#1a1a1a;font-weight:700;">8.1</div>
<div class="t" style="left:1417.60px;top:952.05px;font-size:15.3px;color:#1a1a1a;">Maximum</div>
<div class="t" style="left:1767.40px;top:952.05px;font-size:15.3px;color:#1a1a1a;font-weight:700;">126</div>
<div class="r" style="left:944.8px;top:985px;width:464.5px;height:30px;border:1.4px solid #8a8a8a;border-radius:6px 6px 0 0;border-bottom:none;"></div>
<div class="t" style="left:988.60px;top:993.87px;font-size:10.2px;color:#555;font-weight:700;letter-spacing:-0.2px;">% Total usage time</div>
<svg style="left:1001px;top:1008.3px" width="10" height="7"><path d="M0.5 6.5 L5 0.5 L9.5 6.5 Z" fill="#444"/></svg>
<div class="r" style="left:1417px;top:985px;width:465px;height:30px;border:1.4px solid #8a8a8a;border-radius:6px 6px 0 0;border-bottom:none;"></div>
<div class="t" style="left:1461.00px;top:993.87px;font-size:10.2px;color:#555;font-weight:700;letter-spacing:-0.2px;">Average unintentional leak (l/min)</div>
<svg style="left:1473px;top:1008.3px" width="10" height="7"><path d="M0.5 6.5 L5 0.5 L9.5 6.5 Z" fill="#444"/></svg>
<div class="r" style="left:115px;top:1014.8px;width:1805px;height:5.2px;background:#fff;"></div>
<div class="r" style="left:115px;top:1017.5px;width:1805px;height:1.5px;background:#ececec;"></div>
<div class="r" style="left:0px;top:1020px;width:1920px;height:60px;background:linear-gradient(90deg,#c9f3ee 0%,#c9f2ea 50%,#c9efe3 100%);"></div>
<div class="r" style="left:0px;top:1019.5px;width:1920px;height:1px;background:#aacfc8;"></div>
<svg style="left:24px;top:1026px" width="36" height="32" viewBox="0 0 36 32">
<path d="M2.5 18.5 L9.5 25.5 L14 21" fill="none" stroke="#8a1a10" stroke-width="4.5"/>
<path d="M9.5 25.5 L21 14" fill="none" stroke="#d44010" stroke-width="4.5"/>
<rect x="16" y="20" width="15" height="10.5" rx="1.5" fill="#e84e0f"/>
<circle cx="24.5" cy="11.3" r="9.7" fill="#d42a20"/>
<text x="24.5" y="16.3" font-family="Liberation Sans" font-size="13.5" fill="#fff" text-anchor="middle">3</text></svg>
<div class="t" style="left:64.50px;top:1032.53px;font-size:14.5px;color:#1f1f1f;">0R37</div>
<div class="t" style="left:64.50px;top:1052.53px;font-size:14.5px;color:#c42b1c;">-6.46%</div>
<svg style="left:503px;top:1036px" width="30" height="29" viewBox="0 0 30 29"><defs><linearGradient id="wg" x1="0" y1="0" x2="1" y2="1"><stop offset="0" stop-color="#3cc8f8"/><stop offset="1" stop-color="#0a72d6"/></linearGradient></defs>
<rect x="0" y="0" width="14" height="13.5" rx="1" fill="url(#wg)"/><rect x="15.5" y="0" width="14" height="13.5" rx="1" fill="url(#wg)"/><rect x="0" y="15" width="14" height="13.5" rx="1" fill="url(#wg)"/><rect x="15.5" y="15" width="14" height="13.5" rx="1" fill="url(#wg)"/></svg>
<div class="r" style="left:548.75px;top:1030.75px;width:273.25px;height:38.75px;background:#eaf8f5;border:1px solid #c2dcd8;border-radius:20px;"></div>
<svg style="left:562px;top:1040px" width="22" height="22"><circle cx="8.5" cy="8.5" r="6.8" fill="none" stroke="#222" stroke-width="2"/><path d="M13.5 13.5 L19 19" stroke="#222" stroke-width="2.2" stroke-linecap="round"/></svg>
<div class="t" style="left:594.50px;top:1042.70px;font-size:16.3px;color:#4a4a4a;">Search</div>
<svg style="left:838px;top:1036px" width="32" height="30"><rect x="9" y="0" width="21" height="21" rx="2" fill="#f4f4f4"/><rect x="0" y="9" width="22" height="20" rx="2" fill="#2a2a2a"/><rect x="9" y="9" width="13" height="12" fill="#bdbdbd"/></svg>
<div class="r" style="left:884px;top:1025px;width:46px;height:50px;background:#e9b3b0;border-radius:5px;"></div>
<div class="r" style="left:927.5px;top:1025px;width:5px;height:50px;background:#e4bcb9;border-radius:0 4px 4px 0;"></div>
<svg style="left:893px;top:1036px" width="32" height="30" viewBox="0 0 32 30"><rect x="9" y="1" width="20" height="26" rx="2" fill="#28a8ea"/><rect x="19" y="1" width="10" height="10" fill="#50d9ff"/><path d="M9 13 L29 13 L29 27 L9 27 Z" fill="#0a64c0"/><path d="M9 13 L19 21 L29 13" fill="#1490df"/>
<rect x="0" y="7" width="16" height="16" rx="2" fill="#0364b8"/><ellipse cx="8" cy="15" rx="4.3" ry="5" fill="none" stroke="#fff" stroke-width="2"/></svg>
<div class="r" style="left:895px;top:1070px;width:27.5px;height:3.5px;background:#c42b1c;border-radius:2px;"></div>
<svg style="left:948px;top:1036px" width="32" height="28" viewBox="0 0 32 28"><path d="M1 3 Q1 1 3 1 H11 L14 4 H29 Q31 4 31 6 V25 Q31 27 29 27 H3 Q1 27 1 25 Z" fill="#f0b732"/><rect x="1" y="8" width="30" height="19" rx="1.5" fill="#ffd35c"/><rect x="6" y="19" width="20" height="5" rx="1" fill="#1a78d0"/></svg>
<svg style="left:1004px;top:1035px" width="30" height="30" viewBox="0 0 30 30"><path d="M9 6 V3 Q9 1 11 1 H19 Q21 1 21 3 V6" fill="none" stroke="#2ab0f0" stroke-width="2"/><rect x="0" y="5" width="30" height="24" rx="3" fill="#1e3a78"/><rect x="9" y="11" width="5.5" height="5.5" fill="#f25022"/><rect x="15.5" y="11" width="5.5" height="5.5" fill="#7fba00"/><rect x="9" y="17.5" width="5.5" height="5.5" fill="#00a4ef"/><rect x="15.5" y="17.5" width="5.5" height="5.5" fill="#ffb900"/></svg>
<svg style="left:1058px;top:1035px" width="32" height="32" viewBox="0 0 32 32"><defs><linearGradient id="eg1058" x1="0" y1="0" x2="1" y2="1"><stop offset="0" stop-color="#36c0e8"/><stop offset="0.6" stop-color="#1e8ad8"/><stop offset="1" stop-color="#0c59a4"/></linearGradient></defs><circle cx="16" cy="16" r="15" fill="url(#eg1058)"/><path d="M16 1 A15 15 0 0 1 31 16 Q26 9 18 11 Q10 13 12 21 Q6 14 10 6 Z" fill="#4ed06a" opacity="0.85"/><circle cx="19" cy="17" r="6" fill="#c6eee8"/><circle cx="9" cy="21" r="8" fill="#e8e8e8"/><circle cx="9" cy="19" r="3" fill="#888"/><path d="M3.5 27 Q9 20 14.5 27" fill="#888"/></svg>
<svg style="left:1113px;top:1036px" width="31" height="29" viewBox="0 0 31 29"><rect x="7" y="0" width="24" height="29" rx="2" fill="#21a366"/><rect x="7" y="0" width="24" height="9.5" fill="#33c481"/><rect x="7" y="19" width="24" height="10" fill="#107c41"/><rect x="0" y="6" width="17" height="17" rx="2" fill="#107c41"/><text x="8.5" y="19.5" font-family="Liberation Sans" font-weight="700" font-size="13" fill="#fff" text-anchor="middle">X</text></svg>
<svg style="left:1168px;top:1036px" width="31" height="29" viewBox="0 0 31 29"><rect x="7" y="0" width="24" height="29" rx="2" fill="#2b7cd3"/><rect x="7" y="0" width="24" height="9.5" fill="#41a5ee"/><rect x="7" y="19" width="24" height="10" fill="#185abd"/><rect x="0" y="6" width="17" height="17" rx="2" fill="#185abd"/><text x="8.5" y="19.5" font-family="Liberation Sans" font-weight="700" font-size="12" fill="#fff" text-anchor="middle">W</text></svg>
<svg style="left:1223px;top:1035px" width="32" height="32" viewBox="0 0 32 32"><defs><linearGradient id="eg1223" x1="0" y1="0" x2="1" y2="1"><stop offset="0" stop-color="#36c0e8"/><stop offset="0.6" stop-color="#1e8ad8"/><stop offset="1" stop-color="#0c59a4"/></linearGradient></defs><circle cx="16" cy="16" r="15" fill="url(#eg1223)"/><path d="M16 1 A15 15 0 0 1 31 16 Q26 9 18 11 Q10 13 12 21 Q6 14 10 6 Z" fill="#4ed06a" opacity="0.85"/><circle cx="19" cy="17" r="6" fill="#c6eee8"/><rect x="1" y="18" width="15" height="12" rx="1.5" fill="#c87a1c"/><rect x="5" y="15.5" width="7" height="3" fill="none" stroke="#a05a10" stroke-width="1.5"/></svg>
<svg style="left:1278px;top:1035px" width="32" height="30" viewBox="0 0 32 30"><circle cx="21" cy="6" r="4.5" fill="#7b83eb"/><circle cx="28" cy="8" r="3.3" fill="#5059c9"/><rect x="13" y="11" width="14" height="16" rx="6" fill="#7b83eb"/><rect x="24" y="13" width="8" height="12" rx="4" fill="#5059c9"/><rect x="0" y="7" width="17" height="17" rx="2" fill="#4b53bc"/><text x="8.5" y="20.5" font-family="Liberation Sans" font-weight="700" font-size="13" fill="#fff" text-anchor="middle">T</text></svg>
<svg style="left:1333px;top:1035px" width="31" height="31" viewBox="0 0 32 32"><circle cx="16" cy="16" r="15.5" fill="#1ea446"/><path d="M16 16 L2.6 8.25 A15.5 15.5 0 0 1 29.4 8.25 Z" fill="#db4437"/><path d="M16 16 L29.4 8.25 A15.5 15.5 0 0 1 16 31.5 Z" fill="#fcc934"/><circle cx="16" cy="16" r="7.2" fill="#fff"/><circle cx="16" cy="16" r="5.6" fill="#1a73e8"/></svg>
<div class="r" style="left:1380px;top:1025.7px;width:48px;height:49.5px;background:#e2f5f1;border-radius:5px;"></div>
<svg style="left:1389px;top:1035px" width="30" height="30" viewBox="0 0 30 30"><rect x="0" y="0" width="30" height="29" rx="4" fill="#12b2ea"/><path d="M17.5 2.5 C9.5 4 9 8.5 13 13 C17 17.5 16.5 20.5 11.5 26.5 C19.5 24 21 19 17 14 C13 9.5 13.5 6 17.5 2.5 Z" fill="#fff"/></svg>
<div class="r" style="left:1394px;top:1069.5px;width:19px;height:3.5px;background:#1a6fd0;border-radius:2px;"></div>
<svg style="left:1586px;top:1043px" width="16" height="9"><path d="M1 8 L8 1 L15 8" fill="none" stroke="#222" stroke-width="1.7"/></svg>
<svg style="left:1621px;top:1041px" width="24" height="16" viewBox="0 0 24 16"><path d="M5 15 Q0 15 0.5 10.5 Q1 7 5 7 Q6 1 12 1 Q17 1 18.5 6 Q23.5 6 23.5 10.5 Q23.5 15 19 15 Z" fill="#1d8fe0"/></svg>
<div class="t" style="left:1381.00px;width:600px;text-align:center;top:1033.90px;font-size:14.3px;color:#1f1f1f;">ENG</div>
<div class="t" style="left:1381.00px;width:600px;text-align:center;top:1053.50px;font-size:14.3px;color:#1f1f1f;">UK</div>
<svg style="left:1717px;top:1040px" width="22" height="17" viewBox="0 0 22 17"><path d="M1 6 Q11 -3 21 6" fill="none" stroke="#222" stroke-width="1.6"/><path d="M4.5 9.3 Q11 3.5 17.5 9.3" fill="none" stroke="#222" stroke-width="1.6"/><path d="M8 12.5 Q11 10 14 12.5" fill="none" stroke="#222" stroke-width="1.6"/><circle cx="11" cy="15" r="1.7" fill="#222"/></svg>
<svg style="left:1747px;top:1040px" width="22" height="18" viewBox="0 0 22 18"><path d="M1 6 H5 L10 1.5 V16.5 L5 12 H1 Z" fill="none" stroke="#222" stroke-width="1.4" stroke-linejoin="round"/><path d="M13 6 Q15 9 13 12" fill="none" stroke="#222" stroke-width="1.4"/><path d="M16 3.5 Q20 9 16 14.5" fill="none" stroke="#222" stroke-width="1.4"/></svg>
<svg style="left:1777px;top:1040px" width="22" height="18" viewBox="0 0 22 18"><rect x="1" y="5" width="17" height="10" rx="1.5" fill="none" stroke="#222" stroke-width="1.4"/><rect x="18.5" y="8" width="2.5" height="4" fill="#222"/><rect x="3" y="7" width="13" height="6" fill="#222"/><path d="M6 0 L3 5 L6 5 L4 9" fill="none" stroke="#222" stroke-width="1.2"/></svg>
<div class="t" style="right:24.30px;top:1032.80px;font-size:15px;color:#1f1f1f;">13:44</div>
<div class="t" style="right:24.30px;top:1052.60px;font-size:15px;color:#1f1f1f;">17/07/2025</div>
</body></html>
